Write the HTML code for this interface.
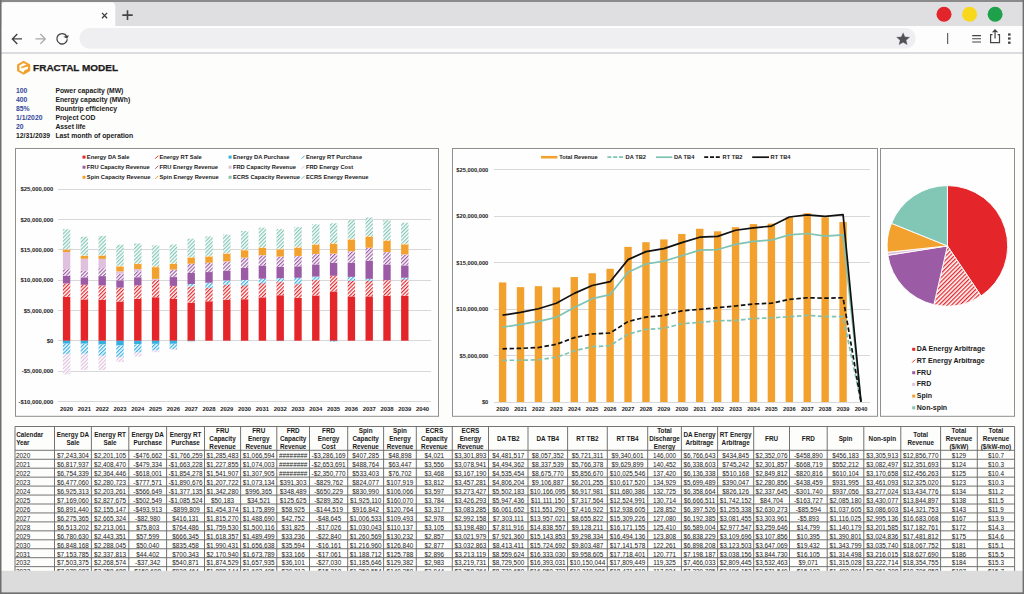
<!DOCTYPE html>
<html><head><meta charset="utf-8">
<style>
html,body{margin:0;padding:0;}
body{width:1024px;height:594px;overflow:hidden;position:relative;background:#fdfdfb;font-family:"Liberation Sans", sans-serif;}
svg text{font-family:"Liberation Sans", sans-serif;}
</style></head><body>
<svg width="1024" height="594" viewBox="0 0 1024 594" style="position:absolute;left:0;top:0">
<defs><pattern id="he4262b" patternUnits="userSpaceOnUse" width="2.65" height="2.65" patternTransform="rotate(45)"><rect width="2.65" height="2.65" fill="#fff"/><rect x="0" y="0" width="1.2" height="2.65" fill="#e4262b"/></pattern><pattern id="h35aee0" patternUnits="userSpaceOnUse" width="2.65" height="2.65" patternTransform="rotate(45)"><rect width="2.65" height="2.65" fill="#fff"/><rect x="0" y="0" width="1.2" height="2.65" fill="#35aee0"/></pattern><pattern id="h9c5ba5" patternUnits="userSpaceOnUse" width="2.65" height="2.65" patternTransform="rotate(45)"><rect width="2.65" height="2.65" fill="#fff"/><rect x="0" y="0" width="1.2" height="2.65" fill="#9c5ba5"/></pattern><pattern id="hdfc1df" patternUnits="userSpaceOnUse" width="2.65" height="2.65" patternTransform="rotate(45)"><rect width="2.65" height="2.65" fill="#fff"/><rect x="0" y="0" width="1.2" height="2.65" fill="#dfc1df"/></pattern><pattern id="hf2a12e" patternUnits="userSpaceOnUse" width="2.65" height="2.65" patternTransform="rotate(45)"><rect width="2.65" height="2.65" fill="#fff"/><rect x="0" y="0" width="1.2" height="2.65" fill="#f2a12e"/></pattern><pattern id="h82c6b6" patternUnits="userSpaceOnUse" width="2.65" height="2.65" patternTransform="rotate(45)"><rect width="2.65" height="2.65" fill="#fff"/><rect x="0" y="0" width="1.2" height="2.65" fill="#82c6b6"/></pattern><pattern id="pe4262b" patternUnits="userSpaceOnUse" width="3.0" height="3.0" patternTransform="rotate(45)"><rect width="3.0" height="3.0" fill="#fff"/><rect x="0" y="0" width="1.3" height="3.0" fill="#e4262b"/></pattern></defs>
<!-- page bg -->
<rect x="0" y="0" width="1024" height="594" fill="#fdfdfb"/>
<!-- browser chrome -->
<rect x="0" y="0" width="1024" height="26" fill="#dfdee1"/>
<path d="M1.5,26 L1.5,6 Q1.5,2.2 5.5,2.2 L111,2.2 Q115.3,2.2 115.3,6.5 L115.3,26 Z" fill="#fdfdfd"/>
<rect x="0" y="26" width="1024" height="26" fill="#fdfdfd"/>
<rect x="0" y="52" width="1024" height="2" fill="#dcdce0"/>
<rect x="79.4" y="28" width="836.4" height="20.6" rx="10.3" fill="#efeef0"/>
<!-- tab close x -->
<path d="M102,12.9 L107.1,18.2 M107.1,12.9 L102,18.2" stroke="#3c3c3c" stroke-width="1.3" fill="none"/>
<!-- new tab + -->
<path d="M127.5,10.2 L127.5,20 M122.3,15.1 L132.7,15.1" stroke="#444" stroke-width="1.6" fill="none"/>
<!-- traffic lights -->
<circle cx="944" cy="14.2" r="7.5" fill="#e3252b"/>
<circle cx="969.6" cy="14.2" r="7.5" fill="#f8d81c"/>
<circle cx="995.1" cy="14.2" r="7.5" fill="#1ea14a"/>
<!-- back -->
<path d="M22,38.9 L12.6,38.9 M17.3,34.0 L12.4,38.9 L17.3,43.9" stroke="#444" stroke-width="1.4" fill="none"/>
<!-- forward -->
<path d="M35.5,38.9 L45,38.9 M40.4,34.0 L45.2,38.9 L40.4,43.9" stroke="#a8a8a8" stroke-width="1.3" fill="none"/>
<!-- reload -->
<path d="M66.6,36.15 A5.2,5.2 0 1 0 67.28,39.2" stroke="#444" stroke-width="1.3" fill="none"/>
<path d="M63.3,36.7 L68.9,35.3 L67.3,38.8 Z" fill="#444"/>
<!-- star -->
<path d="M903.1,32.9 L904.9,36.9 L909.5,37.3 L906.0,40.3 L907.1,44.6 L903.1,42.3 L899.1,44.6 L900.2,40.3 L896.7,37.3 L901.3,36.9 Z" fill="#505055" stroke="#505055" stroke-width="0.4" stroke-linejoin="round"/>
<!-- bar -->
<rect x="947.1" y="33" width="1.1" height="11" fill="#555"/>
<!-- hamburger -->
<path d="M972.2,35.6 L981,35.6 M972.2,38.8 L981,38.8 M972.2,42 L981,42" stroke="#444" stroke-width="1.1" fill="none"/>
<!-- share -->
<path d="M992.5,34.6 L990.6,34.6 L990.6,42.6 L999.5,42.6 L999.5,34.6 L997.6,34.6 M995.05,30 L995.05,38.5 M992.6,32.4 L995.05,29.9 L997.5,32.4" stroke="#444" stroke-width="1.2" fill="none"/>
<!-- kebab -->
<rect x="1008" y="33.4" width="2.6" height="2.2" fill="#444"/>
<rect x="1008" y="37.4" width="2.6" height="2.2" fill="#444"/>
<rect x="1008" y="41.6" width="2.6" height="2.2" fill="#444"/>
<!-- logo -->
<path d="M23.65,60.8 L30.2,64.55 L30.2,71.05 L23.65,74.8 L17.1,71.05 L17.1,64.55 Z" fill="#f1a12c"/>
<path d="M23.65,63.0 L28.0,65.5 L28.0,70.2 L23.65,72.6 L19.4,70.2 L19.4,65.5 Z" fill="#fff"/>
<path d="M21.3,66.7 L28.2,64.0 L28.2,66.5 L21.5,68.2 Q20.9,67.5 21.3,66.7 Z" fill="#f1a12c"/>
<path d="M24.0,70.7 L28.2,68.6 L28.2,71.2 L23.65,73.2 Z" fill="#f1a12c"/>
<text x="33.1" y="70.8" font-size="9.0" font-weight="bold" fill="#1c1c1c" stroke="#1c1c1c" stroke-width="0.25" textLength="85" lengthAdjust="spacingAndGlyphs">FRACTAL MODEL</text>
<text x="16" y="93.00" font-size="6.8" font-weight="bold" fill="#34489c">100</text>
<text x="55.4" y="93.00" font-size="6.8" font-weight="bold" fill="#1a1a1a">Power capacity (MW)</text>
<text x="16" y="101.95" font-size="6.8" font-weight="bold" fill="#34489c">400</text>
<text x="55.4" y="101.95" font-size="6.8" font-weight="bold" fill="#1a1a1a">Energy capacity (MWh)</text>
<text x="16" y="110.90" font-size="6.8" font-weight="bold" fill="#34489c">85%</text>
<text x="55.4" y="110.90" font-size="6.8" font-weight="bold" fill="#1a1a1a">Rountrip efficiency</text>
<text x="16" y="119.85" font-size="6.8" font-weight="bold" fill="#34489c">1/1/2020</text>
<text x="55.4" y="119.85" font-size="6.8" font-weight="bold" fill="#1a1a1a">Project COD</text>
<text x="16" y="128.80" font-size="6.8" font-weight="bold" fill="#34489c">20</text>
<text x="55.4" y="128.80" font-size="6.8" font-weight="bold" fill="#1a1a1a">Asset life</text>
<text x="16" y="137.75" font-size="6.8" font-weight="bold" fill="#1a1a1a">12/31/2039</text>
<text x="55.4" y="137.75" font-size="6.8" font-weight="bold" fill="#1a1a1a">Last month of operation</text>
<rect x="15.5" y="148.5" width="423" height="267.8" fill="#fefefe" stroke="#8f8f8f" stroke-width="1"/>
<line x1="58" x2="431" y1="189.50" y2="189.50" stroke="#d8d8d8" stroke-width="1"/>
<text x="53.30" y="191.15" font-size="5.9" text-anchor="end" font-weight="bold" fill="#1a1a1a" >$25,000,000</text>
<line x1="58" x2="431" y1="219.50" y2="219.50" stroke="#d8d8d8" stroke-width="1"/>
<text x="53.30" y="221.50" font-size="5.9" text-anchor="end" font-weight="bold" fill="#1a1a1a" >$20,000,000</text>
<line x1="58" x2="431" y1="249.50" y2="249.50" stroke="#d8d8d8" stroke-width="1"/>
<text x="53.30" y="251.85" font-size="5.9" text-anchor="end" font-weight="bold" fill="#1a1a1a" >$15,000,000</text>
<line x1="58" x2="431" y1="280.50" y2="280.50" stroke="#d8d8d8" stroke-width="1"/>
<text x="53.30" y="282.20" font-size="5.9" text-anchor="end" font-weight="bold" fill="#1a1a1a" >$10,000,000</text>
<line x1="58" x2="431" y1="310.50" y2="310.50" stroke="#d8d8d8" stroke-width="1"/>
<text x="53.30" y="312.55" font-size="5.9" text-anchor="end" font-weight="bold" fill="#1a1a1a" >$5,000,000</text>
<line x1="58" x2="431" y1="340.50" y2="340.50" stroke="#d8d8d8" stroke-width="1"/>
<text x="53.30" y="342.90" font-size="5.9" text-anchor="end" font-weight="bold" fill="#1a1a1a" >$0</text>
<line x1="58" x2="431" y1="371.50" y2="371.50" stroke="#d8d8d8" stroke-width="1"/>
<text x="53.30" y="373.25" font-size="5.9" text-anchor="end" font-weight="bold" fill="#1a1a1a" >-$5,000,000</text>
<line x1="58" x2="431" y1="401.50" y2="401.50" stroke="#d8d8d8" stroke-width="1"/>
<text x="53.30" y="403.60" font-size="5.9" text-anchor="end" font-weight="bold" fill="#1a1a1a" >-$10,000,000</text>
<text x="66.60" y="410.60" font-size="5.9" text-anchor="middle" font-weight="bold" fill="#1a1a1a" >2020</text>
<text x="84.40" y="410.60" font-size="5.9" text-anchor="middle" font-weight="bold" fill="#1a1a1a" >2021</text>
<text x="102.20" y="410.60" font-size="5.9" text-anchor="middle" font-weight="bold" fill="#1a1a1a" >2022</text>
<text x="120.00" y="410.60" font-size="5.9" text-anchor="middle" font-weight="bold" fill="#1a1a1a" >2023</text>
<text x="137.80" y="410.60" font-size="5.9" text-anchor="middle" font-weight="bold" fill="#1a1a1a" >2024</text>
<text x="155.60" y="410.60" font-size="5.9" text-anchor="middle" font-weight="bold" fill="#1a1a1a" >2025</text>
<text x="173.40" y="410.60" font-size="5.9" text-anchor="middle" font-weight="bold" fill="#1a1a1a" >2026</text>
<text x="191.20" y="410.60" font-size="5.9" text-anchor="middle" font-weight="bold" fill="#1a1a1a" >2027</text>
<text x="209.00" y="410.60" font-size="5.9" text-anchor="middle" font-weight="bold" fill="#1a1a1a" >2028</text>
<text x="226.80" y="410.60" font-size="5.9" text-anchor="middle" font-weight="bold" fill="#1a1a1a" >2029</text>
<text x="244.60" y="410.60" font-size="5.9" text-anchor="middle" font-weight="bold" fill="#1a1a1a" >2030</text>
<text x="262.40" y="410.60" font-size="5.9" text-anchor="middle" font-weight="bold" fill="#1a1a1a" >2031</text>
<text x="280.20" y="410.60" font-size="5.9" text-anchor="middle" font-weight="bold" fill="#1a1a1a" >2032</text>
<text x="298.00" y="410.60" font-size="5.9" text-anchor="middle" font-weight="bold" fill="#1a1a1a" >2033</text>
<text x="315.80" y="410.60" font-size="5.9" text-anchor="middle" font-weight="bold" fill="#1a1a1a" >2034</text>
<text x="333.60" y="410.60" font-size="5.9" text-anchor="middle" font-weight="bold" fill="#1a1a1a" >2035</text>
<text x="351.40" y="410.60" font-size="5.9" text-anchor="middle" font-weight="bold" fill="#1a1a1a" >2036</text>
<text x="369.20" y="410.60" font-size="5.9" text-anchor="middle" font-weight="bold" fill="#1a1a1a" >2037</text>
<text x="387.00" y="410.60" font-size="5.9" text-anchor="middle" font-weight="bold" fill="#1a1a1a" >2038</text>
<text x="404.80" y="410.60" font-size="5.9" text-anchor="middle" font-weight="bold" fill="#1a1a1a" >2039</text>
<text x="422.60" y="410.60" font-size="5.9" text-anchor="middle" font-weight="bold" fill="#1a1a1a" >2040</text>
<rect x="62.90" y="296.83" width="7.4" height="43.97" fill="#e4262b"/>
<rect x="62.90" y="283.47" width="7.4" height="13.36" fill="url(#he4262b)"/>
<rect x="62.90" y="340.80" width="7.4" height="2.89" fill="#35aee0"/>
<rect x="62.90" y="343.69" width="7.4" height="10.72" fill="url(#h35aee0)"/>
<rect x="62.90" y="275.67" width="7.4" height="7.80" fill="#9c5ba5"/>
<rect x="62.90" y="269.20" width="7.4" height="6.47" fill="url(#h9c5ba5)"/>
<rect x="62.90" y="252.03" width="7.4" height="17.16" fill="#dfc1df"/>
<rect x="62.90" y="354.41" width="7.4" height="19.95" fill="url(#hdfc1df)"/>
<rect x="62.90" y="249.56" width="7.4" height="2.47" fill="#f2a12e"/>
<rect x="62.90" y="249.26" width="7.4" height="0.30" fill="url(#hf2a12e)"/>
<rect x="62.90" y="229.20" width="7.4" height="20.04" fill="url(#h82c6b6)"/>
<rect x="80.70" y="299.42" width="7.4" height="41.38" fill="#e4262b"/>
<rect x="80.70" y="284.80" width="7.4" height="14.62" fill="url(#he4262b)"/>
<rect x="80.70" y="340.80" width="7.4" height="2.91" fill="#35aee0"/>
<rect x="80.70" y="343.71" width="7.4" height="10.10" fill="url(#h35aee0)"/>
<rect x="80.70" y="277.34" width="7.4" height="7.45" fill="#9c5ba5"/>
<rect x="80.70" y="270.82" width="7.4" height="6.52" fill="url(#h9c5ba5)"/>
<rect x="80.70" y="258.77" width="7.4" height="12.05" fill="#dfc1df"/>
<rect x="80.70" y="353.81" width="7.4" height="16.11" fill="url(#hdfc1df)"/>
<rect x="80.70" y="255.81" width="7.4" height="2.97" fill="#f2a12e"/>
<rect x="80.70" y="255.42" width="7.4" height="0.39" fill="url(#hf2a12e)"/>
<rect x="80.70" y="236.71" width="7.4" height="18.69" fill="url(#h82c6b6)"/>
<rect x="98.50" y="299.80" width="7.4" height="41.00" fill="#e4262b"/>
<rect x="98.50" y="285.45" width="7.4" height="14.35" fill="url(#he4262b)"/>
<rect x="98.50" y="340.80" width="7.4" height="3.75" fill="#35aee0"/>
<rect x="98.50" y="344.55" width="7.4" height="11.26" fill="url(#h35aee0)"/>
<rect x="98.50" y="276.09" width="7.4" height="9.36" fill="#9c5ba5"/>
<rect x="98.50" y="268.15" width="7.4" height="7.94" fill="url(#h9c5ba5)"/>
<rect x="98.50" y="258.86" width="7.4" height="9.29" fill="#dfc1df"/>
<rect x="98.50" y="355.81" width="7.4" height="14.27" fill="url(#hdfc1df)"/>
<rect x="98.50" y="255.63" width="7.4" height="3.24" fill="#f2a12e"/>
<rect x="98.50" y="255.16" width="7.4" height="0.47" fill="url(#hf2a12e)"/>
<rect x="98.50" y="235.91" width="7.4" height="19.22" fill="url(#h82c6b6)"/>
<rect x="116.30" y="301.48" width="7.4" height="39.32" fill="#e4262b"/>
<rect x="116.30" y="287.64" width="7.4" height="13.84" fill="url(#he4262b)"/>
<rect x="116.30" y="340.80" width="7.4" height="4.72" fill="#35aee0"/>
<rect x="116.30" y="345.52" width="7.4" height="11.48" fill="url(#h35aee0)"/>
<rect x="116.30" y="280.31" width="7.4" height="7.33" fill="#9c5ba5"/>
<rect x="116.30" y="273.80" width="7.4" height="6.51" fill="url(#h9c5ba5)"/>
<rect x="116.30" y="271.42" width="7.4" height="2.38" fill="#dfc1df"/>
<rect x="116.30" y="357.00" width="7.4" height="5.04" fill="url(#hdfc1df)"/>
<rect x="116.30" y="266.42" width="7.4" height="5.00" fill="#f2a12e"/>
<rect x="116.30" y="265.76" width="7.4" height="0.66" fill="url(#hf2a12e)"/>
<rect x="116.30" y="244.75" width="7.4" height="20.99" fill="url(#h82c6b6)"/>
<rect x="134.10" y="298.76" width="7.4" height="42.04" fill="#e4262b"/>
<rect x="134.10" y="285.39" width="7.4" height="13.37" fill="url(#he4262b)"/>
<rect x="134.10" y="340.80" width="7.4" height="3.44" fill="#35aee0"/>
<rect x="134.10" y="344.24" width="7.4" height="8.36" fill="url(#h35aee0)"/>
<rect x="134.10" y="277.24" width="7.4" height="8.15" fill="#9c5ba5"/>
<rect x="134.10" y="271.19" width="7.4" height="6.05" fill="url(#h9c5ba5)"/>
<rect x="134.10" y="269.08" width="7.4" height="2.12" fill="#dfc1df"/>
<rect x="134.10" y="352.60" width="7.4" height="3.95" fill="url(#hdfc1df)"/>
<rect x="134.10" y="264.03" width="7.4" height="5.04" fill="#f2a12e"/>
<rect x="134.10" y="263.39" width="7.4" height="0.64" fill="url(#hf2a12e)"/>
<rect x="134.10" y="243.50" width="7.4" height="19.87" fill="url(#h82c6b6)"/>
<rect x="151.90" y="297.28" width="7.4" height="43.52" fill="#e4262b"/>
<rect x="151.90" y="280.12" width="7.4" height="17.16" fill="url(#he4262b)"/>
<rect x="151.90" y="340.80" width="7.4" height="3.05" fill="#35aee0"/>
<rect x="151.90" y="343.85" width="7.4" height="6.59" fill="url(#h35aee0)"/>
<rect x="151.90" y="279.82" width="7.4" height="0.30" fill="#9c5ba5"/>
<rect x="151.90" y="279.61" width="7.4" height="0.21" fill="url(#h9c5ba5)"/>
<rect x="151.90" y="278.84" width="7.4" height="0.76" fill="#dfc1df"/>
<rect x="151.90" y="350.44" width="7.4" height="1.76" fill="url(#hdfc1df)"/>
<rect x="151.90" y="267.16" width="7.4" height="11.69" fill="#f2a12e"/>
<rect x="151.90" y="266.19" width="7.4" height="0.97" fill="url(#hf2a12e)"/>
<rect x="151.90" y="245.37" width="7.4" height="20.80" fill="url(#h82c6b6)"/>
<rect x="169.70" y="298.97" width="7.4" height="41.83" fill="#e4262b"/>
<rect x="169.70" y="285.89" width="7.4" height="13.08" fill="url(#he4262b)"/>
<rect x="169.70" y="340.80" width="7.4" height="3.00" fill="#35aee0"/>
<rect x="169.70" y="343.80" width="7.4" height="5.46" fill="url(#h35aee0)"/>
<rect x="169.70" y="277.06" width="7.4" height="8.83" fill="#9c5ba5"/>
<rect x="169.70" y="269.92" width="7.4" height="7.14" fill="url(#h9c5ba5)"/>
<rect x="169.70" y="269.56" width="7.4" height="0.36" fill="#dfc1df"/>
<rect x="169.70" y="349.26" width="7.4" height="0.88" fill="url(#hdfc1df)"/>
<rect x="169.70" y="264.00" width="7.4" height="5.57" fill="#f2a12e"/>
<rect x="169.70" y="263.27" width="7.4" height="0.73" fill="url(#hf2a12e)"/>
<rect x="169.70" y="244.53" width="7.4" height="18.72" fill="url(#h82c6b6)"/>
<rect x="187.50" y="302.71" width="7.4" height="38.09" fill="#e4262b"/>
<rect x="187.50" y="286.53" width="7.4" height="16.18" fill="url(#he4262b)"/>
<rect x="187.50" y="340.80" width="7.4" height="0.50" fill="#35aee0"/>
<rect x="187.50" y="284.00" width="7.4" height="2.53" fill="url(#h35aee0)"/>
<rect x="187.50" y="272.99" width="7.4" height="11.02" fill="#9c5ba5"/>
<rect x="187.50" y="263.95" width="7.4" height="9.04" fill="url(#h9c5ba5)"/>
<rect x="187.50" y="263.69" width="7.4" height="0.26" fill="#dfc1df"/>
<rect x="187.50" y="341.30" width="7.4" height="0.30" fill="url(#hdfc1df)"/>
<rect x="187.50" y="257.58" width="7.4" height="6.11" fill="#f2a12e"/>
<rect x="187.50" y="256.92" width="7.4" height="0.66" fill="url(#hf2a12e)"/>
<rect x="187.50" y="238.73" width="7.4" height="18.16" fill="url(#h82c6b6)"/>
<rect x="205.30" y="301.26" width="7.4" height="39.54" fill="#e4262b"/>
<rect x="205.30" y="287.83" width="7.4" height="13.43" fill="url(#he4262b)"/>
<rect x="205.30" y="287.37" width="7.4" height="0.46" fill="#35aee0"/>
<rect x="205.30" y="282.73" width="7.4" height="4.64" fill="url(#h35aee0)"/>
<rect x="205.30" y="272.05" width="7.4" height="10.68" fill="#9c5ba5"/>
<rect x="205.30" y="262.94" width="7.4" height="9.11" fill="url(#h9c5ba5)"/>
<rect x="205.30" y="262.75" width="7.4" height="0.19" fill="#dfc1df"/>
<rect x="205.30" y="340.80" width="7.4" height="0.10" fill="url(#hdfc1df)"/>
<rect x="205.30" y="256.50" width="7.4" height="6.25" fill="#f2a12e"/>
<rect x="205.30" y="255.83" width="7.4" height="0.67" fill="url(#hf2a12e)"/>
<rect x="205.30" y="236.40" width="7.4" height="19.41" fill="url(#h82c6b6)"/>
<rect x="223.10" y="299.64" width="7.4" height="41.16" fill="#e4262b"/>
<rect x="223.10" y="284.81" width="7.4" height="14.83" fill="url(#he4262b)"/>
<rect x="223.10" y="284.46" width="7.4" height="0.35" fill="#35aee0"/>
<rect x="223.10" y="280.42" width="7.4" height="4.04" fill="url(#h35aee0)"/>
<rect x="223.10" y="270.59" width="7.4" height="9.82" fill="#9c5ba5"/>
<rect x="223.10" y="261.55" width="7.4" height="9.04" fill="url(#h9c5ba5)"/>
<rect x="223.10" y="261.35" width="7.4" height="0.20" fill="#dfc1df"/>
<rect x="223.10" y="340.80" width="7.4" height="0.14" fill="url(#hdfc1df)"/>
<rect x="223.10" y="253.70" width="7.4" height="7.65" fill="#f2a12e"/>
<rect x="223.10" y="252.91" width="7.4" height="0.79" fill="url(#hf2a12e)"/>
<rect x="223.10" y="234.55" width="7.4" height="18.34" fill="url(#h82c6b6)"/>
<rect x="240.90" y="299.23" width="7.4" height="41.57" fill="#e4262b"/>
<rect x="240.90" y="285.34" width="7.4" height="13.89" fill="url(#he4262b)"/>
<rect x="240.90" y="285.04" width="7.4" height="0.30" fill="#35aee0"/>
<rect x="240.90" y="279.97" width="7.4" height="5.07" fill="url(#h35aee0)"/>
<rect x="240.90" y="267.89" width="7.4" height="12.08" fill="#9c5ba5"/>
<rect x="240.90" y="257.83" width="7.4" height="10.06" fill="url(#h9c5ba5)"/>
<rect x="240.90" y="257.61" width="7.4" height="0.22" fill="#dfc1df"/>
<rect x="240.90" y="340.80" width="7.4" height="0.10" fill="url(#hdfc1df)"/>
<rect x="240.90" y="250.23" width="7.4" height="7.39" fill="#f2a12e"/>
<rect x="240.90" y="249.46" width="7.4" height="0.77" fill="url(#hf2a12e)"/>
<rect x="240.90" y="231.03" width="7.4" height="18.41" fill="url(#h82c6b6)"/>
<rect x="258.70" y="297.38" width="7.4" height="43.42" fill="#e4262b"/>
<rect x="258.70" y="283.19" width="7.4" height="14.19" fill="url(#he4262b)"/>
<rect x="258.70" y="282.92" width="7.4" height="0.27" fill="#35aee0"/>
<rect x="258.70" y="278.67" width="7.4" height="4.25" fill="url(#h35aee0)"/>
<rect x="258.70" y="265.49" width="7.4" height="13.18" fill="#9c5ba5"/>
<rect x="258.70" y="255.33" width="7.4" height="10.16" fill="url(#h9c5ba5)"/>
<rect x="258.70" y="255.13" width="7.4" height="0.20" fill="#dfc1df"/>
<rect x="258.70" y="340.80" width="7.4" height="0.10" fill="url(#hdfc1df)"/>
<rect x="258.70" y="247.91" width="7.4" height="7.22" fill="#f2a12e"/>
<rect x="258.70" y="247.15" width="7.4" height="0.76" fill="url(#hf2a12e)"/>
<rect x="258.70" y="227.63" width="7.4" height="19.50" fill="url(#h82c6b6)"/>
<rect x="276.50" y="295.25" width="7.4" height="45.55" fill="#e4262b"/>
<rect x="276.50" y="281.48" width="7.4" height="13.77" fill="url(#he4262b)"/>
<rect x="276.50" y="340.80" width="7.4" height="0.23" fill="#35aee0"/>
<rect x="276.50" y="278.20" width="7.4" height="3.28" fill="url(#h35aee0)"/>
<rect x="276.50" y="266.82" width="7.4" height="11.38" fill="#9c5ba5"/>
<rect x="276.50" y="256.76" width="7.4" height="10.06" fill="url(#h9c5ba5)"/>
<rect x="276.50" y="256.54" width="7.4" height="0.22" fill="#dfc1df"/>
<rect x="276.50" y="341.03" width="7.4" height="0.16" fill="url(#hdfc1df)"/>
<rect x="276.50" y="249.34" width="7.4" height="7.20" fill="#f2a12e"/>
<rect x="276.50" y="248.56" width="7.4" height="0.79" fill="url(#hf2a12e)"/>
<rect x="276.50" y="229.00" width="7.4" height="19.54" fill="url(#h82c6b6)"/>
<rect x="294.30" y="297.76" width="7.4" height="43.04" fill="#e4262b"/>
<rect x="294.30" y="284.11" width="7.4" height="13.66" fill="url(#he4262b)"/>
<rect x="294.30" y="283.50" width="7.4" height="0.61" fill="#35aee0"/>
<rect x="294.30" y="277.79" width="7.4" height="5.71" fill="url(#h35aee0)"/>
<rect x="294.30" y="266.32" width="7.4" height="11.47" fill="#9c5ba5"/>
<rect x="294.30" y="256.12" width="7.4" height="10.20" fill="url(#h9c5ba5)"/>
<rect x="294.30" y="255.94" width="7.4" height="0.18" fill="#dfc1df"/>
<rect x="294.30" y="340.80" width="7.4" height="0.12" fill="url(#hdfc1df)"/>
<rect x="294.30" y="247.75" width="7.4" height="8.19" fill="#f2a12e"/>
<rect x="294.30" y="246.90" width="7.4" height="0.85" fill="url(#hf2a12e)"/>
<rect x="294.30" y="227.09" width="7.4" height="19.79" fill="url(#h82c6b6)"/>
<rect x="312.10" y="295.46" width="7.4" height="45.34" fill="#e4262b"/>
<rect x="312.10" y="279.92" width="7.4" height="15.54" fill="url(#he4262b)"/>
<rect x="312.10" y="279.61" width="7.4" height="0.30" fill="#35aee0"/>
<rect x="312.10" y="276.58" width="7.4" height="3.03" fill="url(#h35aee0)"/>
<rect x="312.10" y="264.44" width="7.4" height="12.14" fill="#9c5ba5"/>
<rect x="312.10" y="254.12" width="7.4" height="10.32" fill="url(#h9c5ba5)"/>
<rect x="312.10" y="253.94" width="7.4" height="0.18" fill="#dfc1df"/>
<rect x="312.10" y="340.80" width="7.4" height="0.12" fill="url(#hdfc1df)"/>
<rect x="312.10" y="244.71" width="7.4" height="9.23" fill="#f2a12e"/>
<rect x="312.10" y="243.86" width="7.4" height="0.85" fill="url(#hf2a12e)"/>
<rect x="312.10" y="224.30" width="7.4" height="19.55" fill="url(#h82c6b6)"/>
<rect x="329.90" y="291.39" width="7.4" height="49.41" fill="#e4262b"/>
<rect x="329.90" y="275.79" width="7.4" height="15.60" fill="url(#he4262b)"/>
<rect x="329.90" y="340.80" width="7.4" height="0.30" fill="#35aee0"/>
<rect x="329.90" y="341.10" width="7.4" height="0.73" fill="url(#h35aee0)"/>
<rect x="329.90" y="262.92" width="7.4" height="12.87" fill="#9c5ba5"/>
<rect x="329.90" y="253.82" width="7.4" height="9.11" fill="url(#h9c5ba5)"/>
<rect x="329.90" y="253.63" width="7.4" height="0.18" fill="#dfc1df"/>
<rect x="329.90" y="341.83" width="7.4" height="0.12" fill="url(#hdfc1df)"/>
<rect x="329.90" y="243.92" width="7.4" height="9.71" fill="#f2a12e"/>
<rect x="329.90" y="243.07" width="7.4" height="0.85" fill="url(#hf2a12e)"/>
<rect x="329.90" y="223.33" width="7.4" height="19.73" fill="url(#h82c6b6)"/>
<rect x="347.70" y="296.37" width="7.4" height="44.43" fill="#e4262b"/>
<rect x="347.70" y="280.89" width="7.4" height="15.48" fill="url(#he4262b)"/>
<rect x="347.70" y="280.59" width="7.4" height="0.30" fill="#35aee0"/>
<rect x="347.70" y="276.88" width="7.4" height="3.70" fill="url(#h35aee0)"/>
<rect x="347.70" y="262.80" width="7.4" height="14.08" fill="#9c5ba5"/>
<rect x="347.70" y="251.33" width="7.4" height="11.47" fill="url(#h9c5ba5)"/>
<rect x="347.70" y="251.15" width="7.4" height="0.18" fill="#dfc1df"/>
<rect x="347.70" y="340.80" width="7.4" height="0.12" fill="url(#hdfc1df)"/>
<rect x="347.70" y="239.55" width="7.4" height="11.59" fill="#f2a12e"/>
<rect x="347.70" y="238.70" width="7.4" height="0.85" fill="url(#hf2a12e)"/>
<rect x="347.70" y="219.81" width="7.4" height="18.88" fill="url(#h82c6b6)"/>
<rect x="365.50" y="296.37" width="7.4" height="44.43" fill="#e4262b"/>
<rect x="365.50" y="280.89" width="7.4" height="15.48" fill="url(#he4262b)"/>
<rect x="365.50" y="280.65" width="7.4" height="0.24" fill="#35aee0"/>
<rect x="365.50" y="278.83" width="7.4" height="1.82" fill="url(#h35aee0)"/>
<rect x="365.50" y="260.62" width="7.4" height="18.21" fill="#9c5ba5"/>
<rect x="365.50" y="247.87" width="7.4" height="12.75" fill="url(#h9c5ba5)"/>
<rect x="365.50" y="247.69" width="7.4" height="0.18" fill="#dfc1df"/>
<rect x="365.50" y="340.80" width="7.4" height="0.12" fill="url(#hdfc1df)"/>
<rect x="365.50" y="236.82" width="7.4" height="10.87" fill="#f2a12e"/>
<rect x="365.50" y="235.97" width="7.4" height="0.85" fill="url(#hf2a12e)"/>
<rect x="365.50" y="217.50" width="7.4" height="18.45" fill="url(#h82c6b6)"/>
<rect x="383.30" y="295.76" width="7.4" height="45.04" fill="#e4262b"/>
<rect x="383.30" y="280.10" width="7.4" height="15.66" fill="url(#he4262b)"/>
<rect x="383.30" y="264.44" width="7.4" height="15.66" fill="#9c5ba5"/>
<rect x="383.30" y="252.12" width="7.4" height="12.32" fill="url(#h9c5ba5)"/>
<rect x="383.30" y="251.94" width="7.4" height="0.18" fill="#dfc1df"/>
<rect x="383.30" y="340.80" width="7.4" height="0.12" fill="url(#hdfc1df)"/>
<rect x="383.30" y="240.83" width="7.4" height="11.11" fill="#f2a12e"/>
<rect x="383.30" y="239.98" width="7.4" height="0.85" fill="url(#hf2a12e)"/>
<rect x="383.30" y="220.11" width="7.4" height="19.85" fill="url(#h82c6b6)"/>
<rect x="401.10" y="295.76" width="7.4" height="45.04" fill="#e4262b"/>
<rect x="401.10" y="279.31" width="7.4" height="16.45" fill="url(#he4262b)"/>
<rect x="401.10" y="279.01" width="7.4" height="0.30" fill="#35aee0"/>
<rect x="401.10" y="277.73" width="7.4" height="1.27" fill="url(#h35aee0)"/>
<rect x="401.10" y="265.41" width="7.4" height="12.32" fill="#9c5ba5"/>
<rect x="401.10" y="254.55" width="7.4" height="10.87" fill="url(#h9c5ba5)"/>
<rect x="401.10" y="254.36" width="7.4" height="0.18" fill="#dfc1df"/>
<rect x="401.10" y="340.80" width="7.4" height="0.12" fill="url(#hdfc1df)"/>
<rect x="401.10" y="244.35" width="7.4" height="10.02" fill="#f2a12e"/>
<rect x="401.10" y="243.50" width="7.4" height="0.85" fill="url(#hf2a12e)"/>
<rect x="401.10" y="222.72" width="7.4" height="20.76" fill="url(#h82c6b6)"/>
<rect x="82.50" y="155.60" width="3" height="3" fill="#e4262b"/>
<text x="86.80" y="159.10" font-size="5.75" text-anchor="start" font-weight="bold" fill="#1a1a1a" >Energy DA Sale</text>
<line x1="155.20" y1="158.70" x2="158.20" y2="155.70" stroke="#e4262b" stroke-width="1"/>
<text x="159.50" y="159.10" font-size="5.75" text-anchor="start" font-weight="bold" fill="#1a1a1a" >Energy RT Sale</text>
<rect x="228.60" y="155.60" width="3" height="3" fill="#35aee0"/>
<text x="232.90" y="159.10" font-size="5.75" text-anchor="start" font-weight="bold" fill="#1a1a1a" >Energy DA Purchase</text>
<line x1="301.60" y1="158.70" x2="304.60" y2="155.70" stroke="#35aee0" stroke-width="1"/>
<text x="305.90" y="159.10" font-size="5.75" text-anchor="start" font-weight="bold" fill="#1a1a1a" >Energy RT Purchase</text>
<rect x="82.50" y="165.70" width="3" height="3" fill="#9c5ba5"/>
<text x="86.80" y="169.20" font-size="5.75" text-anchor="start" font-weight="bold" fill="#1a1a1a" >FRU Capacity Revenue</text>
<line x1="155.20" y1="168.80" x2="158.20" y2="165.80" stroke="#9c5ba5" stroke-width="1"/>
<text x="159.50" y="169.20" font-size="5.75" text-anchor="start" font-weight="bold" fill="#1a1a1a" >FRU Energy Revenue</text>
<rect x="228.60" y="165.70" width="3" height="3" fill="#dfc1df"/>
<text x="232.90" y="169.20" font-size="5.75" text-anchor="start" font-weight="bold" fill="#1a1a1a" >FRD Capacity Revenue</text>
<line x1="301.60" y1="168.80" x2="304.60" y2="165.80" stroke="#dfc1df" stroke-width="1"/>
<text x="305.90" y="169.20" font-size="5.75" text-anchor="start" font-weight="bold" fill="#1a1a1a" >FRD Energy Cost</text>
<rect x="82.50" y="175.80" width="3" height="3" fill="#f2a12e"/>
<text x="86.80" y="179.30" font-size="5.75" text-anchor="start" font-weight="bold" fill="#1a1a1a" >Spin Capacity Revenue</text>
<line x1="155.20" y1="178.90" x2="158.20" y2="175.90" stroke="#f2a12e" stroke-width="1"/>
<text x="159.50" y="179.30" font-size="5.75" text-anchor="start" font-weight="bold" fill="#1a1a1a" >Spin Energy Revenue</text>
<rect x="228.60" y="175.80" width="3" height="3" fill="#82c6b6"/>
<text x="232.90" y="179.30" font-size="5.75" text-anchor="start" font-weight="bold" fill="#1a1a1a" >ECRS Capacity Revenue</text>
<line x1="301.60" y1="178.90" x2="304.60" y2="175.90" stroke="#82c6b6" stroke-width="1"/>
<text x="305.90" y="179.30" font-size="5.75" text-anchor="start" font-weight="bold" fill="#1a1a1a" >ECRS Energy Revenue</text>
<rect x="452.5" y="148.5" width="425" height="267.8" fill="#fefefe" stroke="#8f8f8f" stroke-width="1"/>
<line x1="494" x2="870" y1="169.50" y2="169.50" stroke="#d8d8d8" stroke-width="1"/>
<text x="488.30" y="171.50" font-size="5.75" text-anchor="end" font-weight="bold" fill="#1a1a1a" >$25,000,000</text>
<line x1="494" x2="870" y1="216.50" y2="216.50" stroke="#d8d8d8" stroke-width="1"/>
<text x="488.30" y="218.00" font-size="5.75" text-anchor="end" font-weight="bold" fill="#1a1a1a" >$20,000,000</text>
<line x1="494" x2="870" y1="262.50" y2="262.50" stroke="#d8d8d8" stroke-width="1"/>
<text x="488.30" y="264.50" font-size="5.75" text-anchor="end" font-weight="bold" fill="#1a1a1a" >$15,000,000</text>
<line x1="494" x2="870" y1="309.50" y2="309.50" stroke="#d8d8d8" stroke-width="1"/>
<text x="488.30" y="311.00" font-size="5.75" text-anchor="end" font-weight="bold" fill="#1a1a1a" >$10,000,000</text>
<line x1="494" x2="870" y1="355.50" y2="355.50" stroke="#d8d8d8" stroke-width="1"/>
<text x="488.30" y="357.50" font-size="5.75" text-anchor="end" font-weight="bold" fill="#1a1a1a" >$5,000,000</text>
<line x1="494" x2="870" y1="402.50" y2="402.50" stroke="#d8d8d8" stroke-width="1"/>
<text x="488.30" y="404.00" font-size="5.75" text-anchor="end" font-weight="bold" fill="#1a1a1a" >$0</text>
<text x="502.60" y="410.80" font-size="5.7" text-anchor="middle" font-weight="bold" fill="#1a1a1a" >2020</text>
<text x="520.52" y="410.80" font-size="5.7" text-anchor="middle" font-weight="bold" fill="#1a1a1a" >2021</text>
<text x="538.44" y="410.80" font-size="5.7" text-anchor="middle" font-weight="bold" fill="#1a1a1a" >2022</text>
<text x="556.36" y="410.80" font-size="5.7" text-anchor="middle" font-weight="bold" fill="#1a1a1a" >2023</text>
<text x="574.28" y="410.80" font-size="5.7" text-anchor="middle" font-weight="bold" fill="#1a1a1a" >2024</text>
<text x="592.20" y="410.80" font-size="5.7" text-anchor="middle" font-weight="bold" fill="#1a1a1a" >2025</text>
<text x="610.12" y="410.80" font-size="5.7" text-anchor="middle" font-weight="bold" fill="#1a1a1a" >2026</text>
<text x="628.04" y="410.80" font-size="5.7" text-anchor="middle" font-weight="bold" fill="#1a1a1a" >2027</text>
<text x="645.96" y="410.80" font-size="5.7" text-anchor="middle" font-weight="bold" fill="#1a1a1a" >2028</text>
<text x="663.88" y="410.80" font-size="5.7" text-anchor="middle" font-weight="bold" fill="#1a1a1a" >2029</text>
<text x="681.80" y="410.80" font-size="5.7" text-anchor="middle" font-weight="bold" fill="#1a1a1a" >2030</text>
<text x="699.72" y="410.80" font-size="5.7" text-anchor="middle" font-weight="bold" fill="#1a1a1a" >2031</text>
<text x="717.64" y="410.80" font-size="5.7" text-anchor="middle" font-weight="bold" fill="#1a1a1a" >2032</text>
<text x="735.56" y="410.80" font-size="5.7" text-anchor="middle" font-weight="bold" fill="#1a1a1a" >2033</text>
<text x="753.48" y="410.80" font-size="5.7" text-anchor="middle" font-weight="bold" fill="#1a1a1a" >2034</text>
<text x="771.40" y="410.80" font-size="5.7" text-anchor="middle" font-weight="bold" fill="#1a1a1a" >2035</text>
<text x="789.32" y="410.80" font-size="5.7" text-anchor="middle" font-weight="bold" fill="#1a1a1a" >2036</text>
<text x="807.24" y="410.80" font-size="5.7" text-anchor="middle" font-weight="bold" fill="#1a1a1a" >2037</text>
<text x="825.16" y="410.80" font-size="5.7" text-anchor="middle" font-weight="bold" fill="#1a1a1a" >2038</text>
<text x="843.08" y="410.80" font-size="5.7" text-anchor="middle" font-weight="bold" fill="#1a1a1a" >2039</text>
<text x="861.00" y="410.80" font-size="5.7" text-anchor="middle" font-weight="bold" fill="#1a1a1a" >2040</text>
<rect x="498.90" y="282.43" width="7.4" height="119.57" fill="#f2a12e"/>
<rect x="516.82" y="287.13" width="7.4" height="114.87" fill="#f2a12e"/>
<rect x="534.74" y="286.16" width="7.4" height="115.84" fill="#f2a12e"/>
<rect x="552.66" y="287.38" width="7.4" height="114.62" fill="#f2a12e"/>
<rect x="570.58" y="277.06" width="7.4" height="124.94" fill="#f2a12e"/>
<rect x="588.50" y="273.24" width="7.4" height="128.76" fill="#f2a12e"/>
<rect x="606.42" y="268.81" width="7.4" height="133.19" fill="#f2a12e"/>
<rect x="624.34" y="246.85" width="7.4" height="155.15" fill="#f2a12e"/>
<rect x="642.26" y="242.20" width="7.4" height="159.80" fill="#f2a12e"/>
<rect x="660.18" y="239.42" width="7.4" height="162.58" fill="#f2a12e"/>
<rect x="678.10" y="233.97" width="7.4" height="168.03" fill="#f2a12e"/>
<rect x="696.02" y="228.76" width="7.4" height="173.24" fill="#f2a12e"/>
<rect x="713.94" y="231.30" width="7.4" height="170.70" fill="#f2a12e"/>
<rect x="731.86" y="227.16" width="7.4" height="174.84" fill="#f2a12e"/>
<rect x="749.78" y="224.09" width="7.4" height="177.91" fill="#f2a12e"/>
<rect x="767.70" y="223.63" width="7.4" height="178.37" fill="#f2a12e"/>
<rect x="785.62" y="217.30" width="7.4" height="184.70" fill="#f2a12e"/>
<rect x="803.54" y="213.21" width="7.4" height="188.79" fill="#f2a12e"/>
<rect x="821.46" y="217.30" width="7.4" height="184.70" fill="#f2a12e"/>
<rect x="839.38" y="222.04" width="7.4" height="179.96" fill="#f2a12e"/>
<polyline points="502.60,360.32 520.52,360.20 538.44,359.82 556.36,357.30 574.28,350.83 592.20,346.69 610.12,345.63 628.04,334.08 645.96,329.35 663.88,328.33 681.80,323.76 699.72,322.40 717.64,320.82 735.56,320.44 753.48,318.58 771.40,317.83 789.32,316.63 807.24,315.42 825.16,316.63 843.08,316.63 861.00,402.00" fill="none" stroke="#7fc3b3" stroke-width="1.7" stroke-linejoin="round" stroke-dasharray="4.5,2.5"/>
<polyline points="502.60,327.07 520.52,324.46 538.44,321.32 556.36,317.31 574.28,307.46 592.20,298.67 610.12,294.57 628.04,272.20 645.96,264.00 663.88,261.16 681.80,255.76 699.72,250.10 717.64,249.54 735.56,244.36 753.48,241.30 771.40,240.09 789.32,234.88 807.24,233.48 825.16,236.09 843.08,234.88 861.00,402.00" fill="none" stroke="#7fc3b3" stroke-width="1.7" stroke-linejoin="round"/>
<polyline points="502.60,348.79 520.52,348.37 538.44,347.53 556.36,344.33 574.28,337.66 592.20,333.95 610.12,333.02 628.04,321.50 645.96,317.11 663.88,315.53 681.80,310.83 699.72,309.38 717.64,307.60 735.56,306.02 753.48,303.98 771.40,303.23 789.32,299.42 807.24,297.75 825.16,298.21 843.08,297.75 861.00,402.00" fill="none" stroke="#111" stroke-width="1.7" stroke-linejoin="round" stroke-dasharray="4.5,2.5"/>
<polyline points="502.60,315.13 520.52,312.44 538.44,308.76 556.36,303.26 574.28,293.37 592.20,285.52 610.12,281.67 628.04,259.62 645.96,251.61 663.88,248.60 681.80,242.58 699.72,237.22 717.64,236.37 735.56,230.23 753.48,227.90 771.40,226.04 789.32,217.02 807.24,214.88 825.16,216.47 843.08,214.70 861.00,402.00" fill="none" stroke="#111" stroke-width="1.7" stroke-linejoin="round"/>
<line x1="541" x2="557.4" y1="157.2" y2="157.2" stroke="#f2a12e" stroke-width="2.6"/>
<text x="559.20" y="159.30" font-size="5.7" text-anchor="start" font-weight="bold" fill="#1a1a1a" >Total Revenue</text>
<line x1="607.4" x2="623" y1="157.2" y2="157.2" stroke="#7fc3b3" stroke-width="1.7" stroke-dasharray="4,1.8"/>
<text x="625.60" y="159.30" font-size="5.7" text-anchor="start" font-weight="bold" fill="#1a1a1a" >DA TB2</text>
<line x1="656" x2="672.3" y1="157.2" y2="157.2" stroke="#7fc3b3" stroke-width="1.7"/>
<text x="674.00" y="159.30" font-size="5.7" text-anchor="start" font-weight="bold" fill="#1a1a1a" >DA TB4</text>
<line x1="704.2" x2="719.8" y1="157.2" y2="157.2" stroke="#111" stroke-width="1.7" stroke-dasharray="4,1.8"/>
<text x="722.60" y="159.30" font-size="5.7" text-anchor="start" font-weight="bold" fill="#1a1a1a" >RT TB2</text>
<line x1="752.2" x2="769" y1="157.2" y2="157.2" stroke="#111" stroke-width="1.7"/>
<text x="770.60" y="159.30" font-size="5.7" text-anchor="start" font-weight="bold" fill="#1a1a1a" >RT TB4</text>
<rect x="880.5" y="148.5" width="134" height="267.8" fill="#fefefe" stroke="#8f8f8f" stroke-width="1"/>
<path d="M947.4,245.9 L947.40,185.60 A60.3,60.3 0 0 1 981.12,295.89 Z" fill="#e4262b" stroke="#fff" stroke-width="0.9" stroke-linejoin="round"/>
<path d="M947.4,245.9 L981.12,295.89 A60.3,60.3 0 0 1 933.84,304.65 Z" fill="url(#pe4262b)" stroke="#fff" stroke-width="0.9" stroke-linejoin="round"/>
<path d="M947.4,245.9 L933.84,304.65 A60.3,60.3 0 0 1 887.84,255.33 Z" fill="#9c5ba5" stroke="#fff" stroke-width="0.9" stroke-linejoin="round"/>
<path d="M947.4,245.9 L887.84,255.33 A60.3,60.3 0 0 1 887.43,252.20 Z" fill="#dfc1df" stroke="#fff" stroke-width="0.9" stroke-linejoin="round"/>
<path d="M947.4,245.9 L887.43,252.20 A60.3,60.3 0 0 1 891.49,223.31 Z" fill="#f2a12e" stroke="#fff" stroke-width="0.9" stroke-linejoin="round"/>
<path d="M947.4,245.9 L891.49,223.31 A60.3,60.3 0 0 1 947.40,185.60 Z" fill="#82c6b6" stroke="#fff" stroke-width="0.9" stroke-linejoin="round"/>
<rect x="912.2" y="347.80" width="3" height="3" fill="#e4262b"/>
<text x="916.80" y="351.30" font-size="7.0" text-anchor="start" font-weight="bold" fill="#1a1a1a" >DA Energy Arbitrage</text>
<line x1="912.2" y1="362.60" x2="915.2" y2="359.60" stroke="#e4262b" stroke-width="1"/>
<text x="916.80" y="363.00" font-size="7.0" text-anchor="start" font-weight="bold" fill="#1a1a1a" >RT Energy Arbitrage</text>
<rect x="912.2" y="371.20" width="3" height="3" fill="#9c5ba5"/>
<text x="916.80" y="374.70" font-size="7.0" text-anchor="start" font-weight="bold" fill="#1a1a1a" >FRU</text>
<rect x="912.2" y="382.90" width="3" height="3" fill="#dfc1df"/>
<text x="916.80" y="386.40" font-size="7.0" text-anchor="start" font-weight="bold" fill="#1a1a1a" >FRD</text>
<rect x="912.2" y="394.60" width="3" height="3" fill="#f2a12e"/>
<text x="916.80" y="398.10" font-size="7.0" text-anchor="start" font-weight="bold" fill="#1a1a1a" >Spin</text>
<rect x="912.2" y="406.30" width="3" height="3" fill="#82c6b6"/>
<text x="916.80" y="409.80" font-size="7.0" text-anchor="start" font-weight="bold" fill="#1a1a1a" >Non-spin</text>
<text x="16.20" y="436.67" font-size="6.35" font-weight="bold" fill="#1a1a1a">Calendar</text>
<text x="16.20" y="444.52" font-size="6.35" font-weight="bold" fill="#1a1a1a">Year</text>
<text x="72.95" y="436.67" font-size="6.35" font-weight="bold" text-anchor="middle" fill="#1a1a1a">Energy DA</text>
<text x="72.95" y="444.52" font-size="6.35" font-weight="bold" text-anchor="middle" fill="#1a1a1a">Sale</text>
<text x="110.10" y="436.67" font-size="6.35" font-weight="bold" text-anchor="middle" fill="#1a1a1a">Energy RT</text>
<text x="110.10" y="444.52" font-size="6.35" font-weight="bold" text-anchor="middle" fill="#1a1a1a">Sale</text>
<text x="147.70" y="436.67" font-size="6.35" font-weight="bold" text-anchor="middle" fill="#1a1a1a">Energy DA</text>
<text x="147.70" y="444.52" font-size="6.35" font-weight="bold" text-anchor="middle" fill="#1a1a1a">Purchase</text>
<text x="185.55" y="436.67" font-size="6.35" font-weight="bold" text-anchor="middle" fill="#1a1a1a">Energy RT</text>
<text x="185.55" y="444.52" font-size="6.35" font-weight="bold" text-anchor="middle" fill="#1a1a1a">Purchase</text>
<text x="222.55" y="432.75" font-size="6.35" font-weight="bold" text-anchor="middle" fill="#1a1a1a">FRU</text>
<text x="222.55" y="440.85" font-size="6.35" font-weight="bold" text-anchor="middle" fill="#1a1a1a">Capacity</text>
<text x="222.55" y="448.95" font-size="6.35" font-weight="bold" text-anchor="middle" fill="#1a1a1a">Revenue</text>
<text x="258.70" y="432.75" font-size="6.35" font-weight="bold" text-anchor="middle" fill="#1a1a1a">FRU</text>
<text x="258.70" y="440.85" font-size="6.35" font-weight="bold" text-anchor="middle" fill="#1a1a1a">Energy</text>
<text x="258.70" y="448.95" font-size="6.35" font-weight="bold" text-anchor="middle" fill="#1a1a1a">Revenue</text>
<text x="293.15" y="432.75" font-size="6.35" font-weight="bold" text-anchor="middle" fill="#1a1a1a">FRD</text>
<text x="293.15" y="440.85" font-size="6.35" font-weight="bold" text-anchor="middle" fill="#1a1a1a">Capacity</text>
<text x="293.15" y="448.95" font-size="6.35" font-weight="bold" text-anchor="middle" fill="#1a1a1a">Revenue</text>
<text x="328.60" y="432.75" font-size="6.35" font-weight="bold" text-anchor="middle" fill="#1a1a1a">FRD</text>
<text x="328.60" y="440.85" font-size="6.35" font-weight="bold" text-anchor="middle" fill="#1a1a1a">Energy</text>
<text x="328.60" y="448.95" font-size="6.35" font-weight="bold" text-anchor="middle" fill="#1a1a1a">Cost</text>
<text x="365.65" y="432.75" font-size="6.35" font-weight="bold" text-anchor="middle" fill="#1a1a1a">Spin</text>
<text x="365.65" y="440.85" font-size="6.35" font-weight="bold" text-anchor="middle" fill="#1a1a1a">Capacity</text>
<text x="365.65" y="448.95" font-size="6.35" font-weight="bold" text-anchor="middle" fill="#1a1a1a">Revenue</text>
<text x="399.95" y="432.75" font-size="6.35" font-weight="bold" text-anchor="middle" fill="#1a1a1a">Spin</text>
<text x="399.95" y="440.85" font-size="6.35" font-weight="bold" text-anchor="middle" fill="#1a1a1a">Energy</text>
<text x="399.95" y="448.95" font-size="6.35" font-weight="bold" text-anchor="middle" fill="#1a1a1a">Revenue</text>
<text x="434.30" y="432.75" font-size="6.35" font-weight="bold" text-anchor="middle" fill="#1a1a1a">ECRS</text>
<text x="434.30" y="440.85" font-size="6.35" font-weight="bold" text-anchor="middle" fill="#1a1a1a">Capacity</text>
<text x="434.30" y="448.95" font-size="6.35" font-weight="bold" text-anchor="middle" fill="#1a1a1a">Revenue</text>
<text x="470.40" y="432.75" font-size="6.35" font-weight="bold" text-anchor="middle" fill="#1a1a1a">ECRS</text>
<text x="470.40" y="440.85" font-size="6.35" font-weight="bold" text-anchor="middle" fill="#1a1a1a">Energy</text>
<text x="470.40" y="448.95" font-size="6.35" font-weight="bold" text-anchor="middle" fill="#1a1a1a">Revenue</text>
<text x="508.25" y="440.60" font-size="6.35" font-weight="bold" text-anchor="middle" fill="#1a1a1a">DA TB2</text>
<text x="547.80" y="440.60" font-size="6.35" font-weight="bold" text-anchor="middle" fill="#1a1a1a">DA TB4</text>
<text x="587.45" y="440.60" font-size="6.35" font-weight="bold" text-anchor="middle" fill="#1a1a1a">RT TB2</text>
<text x="627.50" y="440.60" font-size="6.35" font-weight="bold" text-anchor="middle" fill="#1a1a1a">RT TB4</text>
<text x="664.55" y="432.75" font-size="6.35" font-weight="bold" text-anchor="middle" fill="#1a1a1a">Total</text>
<text x="664.55" y="440.85" font-size="6.35" font-weight="bold" text-anchor="middle" fill="#1a1a1a">Discharge</text>
<text x="664.55" y="448.95" font-size="6.35" font-weight="bold" text-anchor="middle" fill="#1a1a1a">Energy</text>
<text x="699.50" y="436.67" font-size="6.35" font-weight="bold" text-anchor="middle" fill="#1a1a1a">DA Energy</text>
<text x="699.50" y="444.52" font-size="6.35" font-weight="bold" text-anchor="middle" fill="#1a1a1a">Arbitrage</text>
<text x="735.65" y="436.67" font-size="6.35" font-weight="bold" text-anchor="middle" fill="#1a1a1a">RT Energy</text>
<text x="735.65" y="444.52" font-size="6.35" font-weight="bold" text-anchor="middle" fill="#1a1a1a">Arbitrage</text>
<text x="771.60" y="440.60" font-size="6.35" font-weight="bold" text-anchor="middle" fill="#1a1a1a">FRU</text>
<text x="808.35" y="440.60" font-size="6.35" font-weight="bold" text-anchor="middle" fill="#1a1a1a">FRD</text>
<text x="845.50" y="440.60" font-size="6.35" font-weight="bold" text-anchor="middle" fill="#1a1a1a">Spin</text>
<text x="882.30" y="440.60" font-size="6.35" font-weight="bold" text-anchor="middle" fill="#1a1a1a">Non-spin</text>
<text x="920.70" y="436.67" font-size="6.35" font-weight="bold" text-anchor="middle" fill="#1a1a1a">Total</text>
<text x="920.70" y="444.52" font-size="6.35" font-weight="bold" text-anchor="middle" fill="#1a1a1a">Revenue</text>
<text x="958.95" y="432.75" font-size="6.35" font-weight="bold" text-anchor="middle" fill="#1a1a1a">Total</text>
<text x="958.95" y="440.85" font-size="6.35" font-weight="bold" text-anchor="middle" fill="#1a1a1a">Revenue</text>
<text x="958.95" y="448.95" font-size="6.35" font-weight="bold" text-anchor="middle" fill="#1a1a1a">($/kW)</text>
<text x="995.95" y="432.75" font-size="6.35" font-weight="bold" text-anchor="middle" fill="#1a1a1a">Total</text>
<text x="995.95" y="440.85" font-size="6.35" font-weight="bold" text-anchor="middle" fill="#1a1a1a">Revenue</text>
<text x="995.95" y="448.95" font-size="6.35" font-weight="bold" text-anchor="middle" fill="#1a1a1a">($/kW-mo)</text>
<text x="16.00" y="458.08" font-size="6.4" fill="#1a1a1a">2020</text>
<text x="72.95" y="458.08" font-size="6.4" text-anchor="middle" fill="#1a1a1a">$7,243,304</text>
<text x="110.10" y="458.08" font-size="6.4" text-anchor="middle" fill="#1a1a1a">$2,201,105</text>
<text x="147.70" y="458.08" font-size="6.4" text-anchor="middle" fill="#1a1a1a">-$476,662</text>
<text x="185.55" y="458.08" font-size="6.4" text-anchor="middle" fill="#1a1a1a">-$1,766,259</text>
<text x="222.55" y="458.08" font-size="6.4" text-anchor="middle" fill="#1a1a1a">$1,285,483</text>
<text x="258.70" y="458.08" font-size="6.4" text-anchor="middle" fill="#1a1a1a">$1,066,594</text>
<text x="293.15" y="458.08" font-size="6.4" text-anchor="middle" fill="#1a1a1a">########</text>
<text x="328.60" y="458.08" font-size="6.4" text-anchor="middle" fill="#1a1a1a">-$3,286,169</text>
<text x="365.65" y="458.08" font-size="6.4" text-anchor="middle" fill="#1a1a1a">$407,285</text>
<text x="399.95" y="458.08" font-size="6.4" text-anchor="middle" fill="#1a1a1a">$48,898</text>
<text x="434.30" y="458.08" font-size="6.4" text-anchor="middle" fill="#1a1a1a">$4,021</text>
<text x="470.40" y="458.08" font-size="6.4" text-anchor="middle" fill="#1a1a1a">$3,301,893</text>
<text x="508.25" y="458.08" font-size="6.4" text-anchor="middle" fill="#1a1a1a">$4,481,517</text>
<text x="547.80" y="458.08" font-size="6.4" text-anchor="middle" fill="#1a1a1a">$8,057,352</text>
<text x="587.45" y="458.08" font-size="6.4" text-anchor="middle" fill="#1a1a1a">$5,721,311</text>
<text x="627.50" y="458.08" font-size="6.4" text-anchor="middle" fill="#1a1a1a">$9,340,601</text>
<text x="664.55" y="458.08" font-size="6.4" text-anchor="middle" fill="#1a1a1a">146,000</text>
<text x="699.50" y="458.08" font-size="6.4" text-anchor="middle" fill="#1a1a1a">$6,766,643</text>
<text x="735.65" y="458.08" font-size="6.4" text-anchor="middle" fill="#1a1a1a">$434,845</text>
<text x="771.60" y="458.08" font-size="6.4" text-anchor="middle" fill="#1a1a1a">$2,352,076</text>
<text x="808.35" y="458.08" font-size="6.4" text-anchor="middle" fill="#1a1a1a">-$458,890</text>
<text x="845.50" y="458.08" font-size="6.4" text-anchor="middle" fill="#1a1a1a">$456,183</text>
<text x="882.30" y="458.08" font-size="6.4" text-anchor="middle" fill="#1a1a1a">$3,305,913</text>
<text x="920.70" y="458.08" font-size="6.4" text-anchor="middle" fill="#1a1a1a">$12,856,770</text>
<text x="958.95" y="458.08" font-size="6.4" text-anchor="middle" fill="#1a1a1a">$129</text>
<text x="995.95" y="458.08" font-size="6.4" text-anchor="middle" fill="#1a1a1a">$10.7</text>
<text x="16.00" y="467.03" font-size="6.4" fill="#1a1a1a">2021</text>
<text x="72.95" y="467.03" font-size="6.4" text-anchor="middle" fill="#1a1a1a">$6,817,937</text>
<text x="110.10" y="467.03" font-size="6.4" text-anchor="middle" fill="#1a1a1a">$2,408,470</text>
<text x="147.70" y="467.03" font-size="6.4" text-anchor="middle" fill="#1a1a1a">-$479,334</text>
<text x="185.55" y="467.03" font-size="6.4" text-anchor="middle" fill="#1a1a1a">-$1,663,228</text>
<text x="222.55" y="467.03" font-size="6.4" text-anchor="middle" fill="#1a1a1a">$1,227,855</text>
<text x="258.70" y="467.03" font-size="6.4" text-anchor="middle" fill="#1a1a1a">$1,074,003</text>
<text x="293.15" y="467.03" font-size="6.4" text-anchor="middle" fill="#1a1a1a">########</text>
<text x="328.60" y="467.03" font-size="6.4" text-anchor="middle" fill="#1a1a1a">-$2,653,691</text>
<text x="365.65" y="467.03" font-size="6.4" text-anchor="middle" fill="#1a1a1a">$488,764</text>
<text x="399.95" y="467.03" font-size="6.4" text-anchor="middle" fill="#1a1a1a">$63,447</text>
<text x="434.30" y="467.03" font-size="6.4" text-anchor="middle" fill="#1a1a1a">$3,556</text>
<text x="470.40" y="467.03" font-size="6.4" text-anchor="middle" fill="#1a1a1a">$3,078,941</text>
<text x="508.25" y="467.03" font-size="6.4" text-anchor="middle" fill="#1a1a1a">$4,494,362</text>
<text x="547.80" y="467.03" font-size="6.4" text-anchor="middle" fill="#1a1a1a">$8,337,539</text>
<text x="587.45" y="467.03" font-size="6.4" text-anchor="middle" fill="#1a1a1a">$5,766,378</text>
<text x="627.50" y="467.03" font-size="6.4" text-anchor="middle" fill="#1a1a1a">$9,629,899</text>
<text x="664.55" y="467.03" font-size="6.4" text-anchor="middle" fill="#1a1a1a">140,452</text>
<text x="699.50" y="467.03" font-size="6.4" text-anchor="middle" fill="#1a1a1a">$6,338,603</text>
<text x="735.65" y="467.03" font-size="6.4" text-anchor="middle" fill="#1a1a1a">$745,242</text>
<text x="771.60" y="467.03" font-size="6.4" text-anchor="middle" fill="#1a1a1a">$2,301,857</text>
<text x="808.35" y="467.03" font-size="6.4" text-anchor="middle" fill="#1a1a1a">-$668,719</text>
<text x="845.50" y="467.03" font-size="6.4" text-anchor="middle" fill="#1a1a1a">$552,212</text>
<text x="882.30" y="467.03" font-size="6.4" text-anchor="middle" fill="#1a1a1a">$3,082,497</text>
<text x="920.70" y="467.03" font-size="6.4" text-anchor="middle" fill="#1a1a1a">$12,351,693</text>
<text x="958.95" y="467.03" font-size="6.4" text-anchor="middle" fill="#1a1a1a">$124</text>
<text x="995.95" y="467.03" font-size="6.4" text-anchor="middle" fill="#1a1a1a">$10.3</text>
<text x="16.00" y="475.98" font-size="6.4" fill="#1a1a1a">2022</text>
<text x="72.95" y="475.98" font-size="6.4" text-anchor="middle" fill="#1a1a1a">$6,754,339</text>
<text x="110.10" y="475.98" font-size="6.4" text-anchor="middle" fill="#1a1a1a">$2,364,446</text>
<text x="147.70" y="475.98" font-size="6.4" text-anchor="middle" fill="#1a1a1a">-$618,001</text>
<text x="185.55" y="475.98" font-size="6.4" text-anchor="middle" fill="#1a1a1a">-$1,854,278</text>
<text x="222.55" y="475.98" font-size="6.4" text-anchor="middle" fill="#1a1a1a">$1,541,907</text>
<text x="258.70" y="475.98" font-size="6.4" text-anchor="middle" fill="#1a1a1a">$1,307,905</text>
<text x="293.15" y="475.98" font-size="6.4" text-anchor="middle" fill="#1a1a1a">########</text>
<text x="328.60" y="475.98" font-size="6.4" text-anchor="middle" fill="#1a1a1a">-$2,350,770</text>
<text x="365.65" y="475.98" font-size="6.4" text-anchor="middle" fill="#1a1a1a">$533,403</text>
<text x="399.95" y="475.98" font-size="6.4" text-anchor="middle" fill="#1a1a1a">$76,702</text>
<text x="434.30" y="475.98" font-size="6.4" text-anchor="middle" fill="#1a1a1a">$3,468</text>
<text x="470.40" y="475.98" font-size="6.4" text-anchor="middle" fill="#1a1a1a">$3,167,190</text>
<text x="508.25" y="475.98" font-size="6.4" text-anchor="middle" fill="#1a1a1a">$4,535,454</text>
<text x="547.80" y="475.98" font-size="6.4" text-anchor="middle" fill="#1a1a1a">$8,675,770</text>
<text x="587.45" y="475.98" font-size="6.4" text-anchor="middle" fill="#1a1a1a">$5,856,670</text>
<text x="627.50" y="475.98" font-size="6.4" text-anchor="middle" fill="#1a1a1a">$10,025,546</text>
<text x="664.55" y="475.98" font-size="6.4" text-anchor="middle" fill="#1a1a1a">137,420</text>
<text x="699.50" y="475.98" font-size="6.4" text-anchor="middle" fill="#1a1a1a">$6,136,338</text>
<text x="735.65" y="475.98" font-size="6.4" text-anchor="middle" fill="#1a1a1a">$510,168</text>
<text x="771.60" y="475.98" font-size="6.4" text-anchor="middle" fill="#1a1a1a">$2,849,812</text>
<text x="808.35" y="475.98" font-size="6.4" text-anchor="middle" fill="#1a1a1a">-$820,816</text>
<text x="845.50" y="475.98" font-size="6.4" text-anchor="middle" fill="#1a1a1a">$610,104</text>
<text x="882.30" y="475.98" font-size="6.4" text-anchor="middle" fill="#1a1a1a">$3,170,658</text>
<text x="920.70" y="475.98" font-size="6.4" text-anchor="middle" fill="#1a1a1a">$12,456,263</text>
<text x="958.95" y="475.98" font-size="6.4" text-anchor="middle" fill="#1a1a1a">$125</text>
<text x="995.95" y="475.98" font-size="6.4" text-anchor="middle" fill="#1a1a1a">$10.4</text>
<text x="16.00" y="484.93" font-size="6.4" fill="#1a1a1a">2023</text>
<text x="72.95" y="484.93" font-size="6.4" text-anchor="middle" fill="#1a1a1a">$6,477,060</text>
<text x="110.10" y="484.93" font-size="6.4" text-anchor="middle" fill="#1a1a1a">$2,280,723</text>
<text x="147.70" y="484.93" font-size="6.4" text-anchor="middle" fill="#1a1a1a">-$777,571</text>
<text x="185.55" y="484.93" font-size="6.4" text-anchor="middle" fill="#1a1a1a">-$1,890,676</text>
<text x="222.55" y="484.93" font-size="6.4" text-anchor="middle" fill="#1a1a1a">$1,207,722</text>
<text x="258.70" y="484.93" font-size="6.4" text-anchor="middle" fill="#1a1a1a">$1,073,134</text>
<text x="293.15" y="484.93" font-size="6.4" text-anchor="middle" fill="#1a1a1a">$391,303</text>
<text x="328.60" y="484.93" font-size="6.4" text-anchor="middle" fill="#1a1a1a">-$829,762</text>
<text x="365.65" y="484.93" font-size="6.4" text-anchor="middle" fill="#1a1a1a">$824,077</text>
<text x="399.95" y="484.93" font-size="6.4" text-anchor="middle" fill="#1a1a1a">$107,919</text>
<text x="434.30" y="484.93" font-size="6.4" text-anchor="middle" fill="#1a1a1a">$3,812</text>
<text x="470.40" y="484.93" font-size="6.4" text-anchor="middle" fill="#1a1a1a">$3,457,281</text>
<text x="508.25" y="484.93" font-size="6.4" text-anchor="middle" fill="#1a1a1a">$4,806,204</text>
<text x="547.80" y="484.93" font-size="6.4" text-anchor="middle" fill="#1a1a1a">$9,106,887</text>
<text x="587.45" y="484.93" font-size="6.4" text-anchor="middle" fill="#1a1a1a">$6,201,255</text>
<text x="627.50" y="484.93" font-size="6.4" text-anchor="middle" fill="#1a1a1a">$10,617,520</text>
<text x="664.55" y="484.93" font-size="6.4" text-anchor="middle" fill="#1a1a1a">134,929</text>
<text x="699.50" y="484.93" font-size="6.4" text-anchor="middle" fill="#1a1a1a">$5,699,489</text>
<text x="735.65" y="484.93" font-size="6.4" text-anchor="middle" fill="#1a1a1a">$390,047</text>
<text x="771.60" y="484.93" font-size="6.4" text-anchor="middle" fill="#1a1a1a">$2,280,856</text>
<text x="808.35" y="484.93" font-size="6.4" text-anchor="middle" fill="#1a1a1a">-$438,459</text>
<text x="845.50" y="484.93" font-size="6.4" text-anchor="middle" fill="#1a1a1a">$931,995</text>
<text x="882.30" y="484.93" font-size="6.4" text-anchor="middle" fill="#1a1a1a">$3,461,093</text>
<text x="920.70" y="484.93" font-size="6.4" text-anchor="middle" fill="#1a1a1a">$12,325,020</text>
<text x="958.95" y="484.93" font-size="6.4" text-anchor="middle" fill="#1a1a1a">$123</text>
<text x="995.95" y="484.93" font-size="6.4" text-anchor="middle" fill="#1a1a1a">$10.3</text>
<text x="16.00" y="493.88" font-size="6.4" fill="#1a1a1a">2024</text>
<text x="72.95" y="493.88" font-size="6.4" text-anchor="middle" fill="#1a1a1a">$6,925,313</text>
<text x="110.10" y="493.88" font-size="6.4" text-anchor="middle" fill="#1a1a1a">$2,203,261</text>
<text x="147.70" y="493.88" font-size="6.4" text-anchor="middle" fill="#1a1a1a">-$566,649</text>
<text x="185.55" y="493.88" font-size="6.4" text-anchor="middle" fill="#1a1a1a">-$1,377,135</text>
<text x="222.55" y="493.88" font-size="6.4" text-anchor="middle" fill="#1a1a1a">$1,342,280</text>
<text x="258.70" y="493.88" font-size="6.4" text-anchor="middle" fill="#1a1a1a">$996,365</text>
<text x="293.15" y="493.88" font-size="6.4" text-anchor="middle" fill="#1a1a1a">$348,489</text>
<text x="328.60" y="493.88" font-size="6.4" text-anchor="middle" fill="#1a1a1a">-$650,229</text>
<text x="365.65" y="493.88" font-size="6.4" text-anchor="middle" fill="#1a1a1a">$830,990</text>
<text x="399.95" y="493.88" font-size="6.4" text-anchor="middle" fill="#1a1a1a">$106,066</text>
<text x="434.30" y="493.88" font-size="6.4" text-anchor="middle" fill="#1a1a1a">$3,597</text>
<text x="470.40" y="493.88" font-size="6.4" text-anchor="middle" fill="#1a1a1a">$3,273,427</text>
<text x="508.25" y="493.88" font-size="6.4" text-anchor="middle" fill="#1a1a1a">$5,502,183</text>
<text x="547.80" y="493.88" font-size="6.4" text-anchor="middle" fill="#1a1a1a">$10,166,095</text>
<text x="587.45" y="493.88" font-size="6.4" text-anchor="middle" fill="#1a1a1a">$6,917,981</text>
<text x="627.50" y="493.88" font-size="6.4" text-anchor="middle" fill="#1a1a1a">$11,680,386</text>
<text x="664.55" y="493.88" font-size="6.4" text-anchor="middle" fill="#1a1a1a">132,725</text>
<text x="699.50" y="493.88" font-size="6.4" text-anchor="middle" fill="#1a1a1a">$6,358,664</text>
<text x="735.65" y="493.88" font-size="6.4" text-anchor="middle" fill="#1a1a1a">$826,126</text>
<text x="771.60" y="493.88" font-size="6.4" text-anchor="middle" fill="#1a1a1a">$2,337,645</text>
<text x="808.35" y="493.88" font-size="6.4" text-anchor="middle" fill="#1a1a1a">-$301,740</text>
<text x="845.50" y="493.88" font-size="6.4" text-anchor="middle" fill="#1a1a1a">$937,056</text>
<text x="882.30" y="493.88" font-size="6.4" text-anchor="middle" fill="#1a1a1a">$3,277,024</text>
<text x="920.70" y="493.88" font-size="6.4" text-anchor="middle" fill="#1a1a1a">$13,434,776</text>
<text x="958.95" y="493.88" font-size="6.4" text-anchor="middle" fill="#1a1a1a">$134</text>
<text x="995.95" y="493.88" font-size="6.4" text-anchor="middle" fill="#1a1a1a">$11.2</text>
<text x="16.00" y="502.83" font-size="6.4" fill="#1a1a1a">2025</text>
<text x="72.95" y="502.83" font-size="6.4" text-anchor="middle" fill="#1a1a1a">$7,169,060</text>
<text x="110.10" y="502.83" font-size="6.4" text-anchor="middle" fill="#1a1a1a">$2,827,675</text>
<text x="147.70" y="502.83" font-size="6.4" text-anchor="middle" fill="#1a1a1a">-$502,549</text>
<text x="185.55" y="502.83" font-size="6.4" text-anchor="middle" fill="#1a1a1a">-$1,085,524</text>
<text x="222.55" y="502.83" font-size="6.4" text-anchor="middle" fill="#1a1a1a">$50,183</text>
<text x="258.70" y="502.83" font-size="6.4" text-anchor="middle" fill="#1a1a1a">$34,521</text>
<text x="293.15" y="502.83" font-size="6.4" text-anchor="middle" fill="#1a1a1a">$125,625</text>
<text x="328.60" y="502.83" font-size="6.4" text-anchor="middle" fill="#1a1a1a">-$289,352</text>
<text x="365.65" y="502.83" font-size="6.4" text-anchor="middle" fill="#1a1a1a">$1,925,110</text>
<text x="399.95" y="502.83" font-size="6.4" text-anchor="middle" fill="#1a1a1a">$160,070</text>
<text x="434.30" y="502.83" font-size="6.4" text-anchor="middle" fill="#1a1a1a">$3,784</text>
<text x="470.40" y="502.83" font-size="6.4" text-anchor="middle" fill="#1a1a1a">$3,426,293</text>
<text x="508.25" y="502.83" font-size="6.4" text-anchor="middle" fill="#1a1a1a">$5,947,436</text>
<text x="547.80" y="502.83" font-size="6.4" text-anchor="middle" fill="#1a1a1a">$11,111,150</text>
<text x="587.45" y="502.83" font-size="6.4" text-anchor="middle" fill="#1a1a1a">$7,317,564</text>
<text x="627.50" y="502.83" font-size="6.4" text-anchor="middle" fill="#1a1a1a">$12,524,991</text>
<text x="664.55" y="502.83" font-size="6.4" text-anchor="middle" fill="#1a1a1a">130,714</text>
<text x="699.50" y="502.83" font-size="6.4" text-anchor="middle" fill="#1a1a1a">$6,666,511</text>
<text x="735.65" y="502.83" font-size="6.4" text-anchor="middle" fill="#1a1a1a">$1,742,152</text>
<text x="771.60" y="502.83" font-size="6.4" text-anchor="middle" fill="#1a1a1a">$84,704</text>
<text x="808.35" y="502.83" font-size="6.4" text-anchor="middle" fill="#1a1a1a">-$163,727</text>
<text x="845.50" y="502.83" font-size="6.4" text-anchor="middle" fill="#1a1a1a">$2,085,180</text>
<text x="882.30" y="502.83" font-size="6.4" text-anchor="middle" fill="#1a1a1a">$3,430,077</text>
<text x="920.70" y="502.83" font-size="6.4" text-anchor="middle" fill="#1a1a1a">$13,844,897</text>
<text x="958.95" y="502.83" font-size="6.4" text-anchor="middle" fill="#1a1a1a">$138</text>
<text x="995.95" y="502.83" font-size="6.4" text-anchor="middle" fill="#1a1a1a">$11.5</text>
<text x="16.00" y="511.78" font-size="6.4" fill="#1a1a1a">2026</text>
<text x="72.95" y="511.78" font-size="6.4" text-anchor="middle" fill="#1a1a1a">$6,891,440</text>
<text x="110.10" y="511.78" font-size="6.4" text-anchor="middle" fill="#1a1a1a">$2,155,147</text>
<text x="147.70" y="511.78" font-size="6.4" text-anchor="middle" fill="#1a1a1a">-$493,913</text>
<text x="185.55" y="511.78" font-size="6.4" text-anchor="middle" fill="#1a1a1a">-$899,809</text>
<text x="222.55" y="511.78" font-size="6.4" text-anchor="middle" fill="#1a1a1a">$1,454,374</text>
<text x="258.70" y="511.78" font-size="6.4" text-anchor="middle" fill="#1a1a1a">$1,175,899</text>
<text x="293.15" y="511.78" font-size="6.4" text-anchor="middle" fill="#1a1a1a">$58,925</text>
<text x="328.60" y="511.78" font-size="6.4" text-anchor="middle" fill="#1a1a1a">-$144,519</text>
<text x="365.65" y="511.78" font-size="6.4" text-anchor="middle" fill="#1a1a1a">$916,842</text>
<text x="399.95" y="511.78" font-size="6.4" text-anchor="middle" fill="#1a1a1a">$120,764</text>
<text x="434.30" y="511.78" font-size="6.4" text-anchor="middle" fill="#1a1a1a">$3,317</text>
<text x="470.40" y="511.78" font-size="6.4" text-anchor="middle" fill="#1a1a1a">$3,083,285</text>
<text x="508.25" y="511.78" font-size="6.4" text-anchor="middle" fill="#1a1a1a">$6,061,652</text>
<text x="547.80" y="511.78" font-size="6.4" text-anchor="middle" fill="#1a1a1a">$11,551,290</text>
<text x="587.45" y="511.78" font-size="6.4" text-anchor="middle" fill="#1a1a1a">$7,416,922</text>
<text x="627.50" y="511.78" font-size="6.4" text-anchor="middle" fill="#1a1a1a">$12,938,605</text>
<text x="664.55" y="511.78" font-size="6.4" text-anchor="middle" fill="#1a1a1a">128,852</text>
<text x="699.50" y="511.78" font-size="6.4" text-anchor="middle" fill="#1a1a1a">$6,397,526</text>
<text x="735.65" y="511.78" font-size="6.4" text-anchor="middle" fill="#1a1a1a">$1,255,338</text>
<text x="771.60" y="511.78" font-size="6.4" text-anchor="middle" fill="#1a1a1a">$2,630,273</text>
<text x="808.35" y="511.78" font-size="6.4" text-anchor="middle" fill="#1a1a1a">-$85,594</text>
<text x="845.50" y="511.78" font-size="6.4" text-anchor="middle" fill="#1a1a1a">$1,037,605</text>
<text x="882.30" y="511.78" font-size="6.4" text-anchor="middle" fill="#1a1a1a">$3,086,603</text>
<text x="920.70" y="511.78" font-size="6.4" text-anchor="middle" fill="#1a1a1a">$14,321,753</text>
<text x="958.95" y="511.78" font-size="6.4" text-anchor="middle" fill="#1a1a1a">$143</text>
<text x="995.95" y="511.78" font-size="6.4" text-anchor="middle" fill="#1a1a1a">$11.9</text>
<text x="16.00" y="520.73" font-size="6.4" fill="#1a1a1a">2027</text>
<text x="72.95" y="520.73" font-size="6.4" text-anchor="middle" fill="#1a1a1a">$6,275,365</text>
<text x="110.10" y="520.73" font-size="6.4" text-anchor="middle" fill="#1a1a1a">$2,665,324</text>
<text x="147.70" y="520.73" font-size="6.4" text-anchor="middle" fill="#1a1a1a">-$82,980</text>
<text x="185.55" y="520.73" font-size="6.4" text-anchor="middle" fill="#1a1a1a">$416,131</text>
<text x="222.55" y="520.73" font-size="6.4" text-anchor="middle" fill="#1a1a1a">$1,815,270</text>
<text x="258.70" y="520.73" font-size="6.4" text-anchor="middle" fill="#1a1a1a">$1,488,690</text>
<text x="293.15" y="520.73" font-size="6.4" text-anchor="middle" fill="#1a1a1a">$42,752</text>
<text x="328.60" y="520.73" font-size="6.4" text-anchor="middle" fill="#1a1a1a">-$48,645</text>
<text x="365.65" y="520.73" font-size="6.4" text-anchor="middle" fill="#1a1a1a">$1,006,533</text>
<text x="399.95" y="520.73" font-size="6.4" text-anchor="middle" fill="#1a1a1a">$109,493</text>
<text x="434.30" y="520.73" font-size="6.4" text-anchor="middle" fill="#1a1a1a">$2,978</text>
<text x="470.40" y="520.73" font-size="6.4" text-anchor="middle" fill="#1a1a1a">$2,992,158</text>
<text x="508.25" y="520.73" font-size="6.4" text-anchor="middle" fill="#1a1a1a">$7,303,111</text>
<text x="547.80" y="520.73" font-size="6.4" text-anchor="middle" fill="#1a1a1a">$13,957,021</text>
<text x="587.45" y="520.73" font-size="6.4" text-anchor="middle" fill="#1a1a1a">$8,655,822</text>
<text x="627.50" y="520.73" font-size="6.4" text-anchor="middle" fill="#1a1a1a">$15,309,226</text>
<text x="664.55" y="520.73" font-size="6.4" text-anchor="middle" fill="#1a1a1a">127,080</text>
<text x="699.50" y="520.73" font-size="6.4" text-anchor="middle" fill="#1a1a1a">$6,192,385</text>
<text x="735.65" y="520.73" font-size="6.4" text-anchor="middle" fill="#1a1a1a">$3,081,455</text>
<text x="771.60" y="520.73" font-size="6.4" text-anchor="middle" fill="#1a1a1a">$3,303,961</text>
<text x="808.35" y="520.73" font-size="6.4" text-anchor="middle" fill="#1a1a1a">-$5,893</text>
<text x="845.50" y="520.73" font-size="6.4" text-anchor="middle" fill="#1a1a1a">$1,116,025</text>
<text x="882.30" y="520.73" font-size="6.4" text-anchor="middle" fill="#1a1a1a">$2,995,136</text>
<text x="920.70" y="520.73" font-size="6.4" text-anchor="middle" fill="#1a1a1a">$16,683,068</text>
<text x="958.95" y="520.73" font-size="6.4" text-anchor="middle" fill="#1a1a1a">$167</text>
<text x="995.95" y="520.73" font-size="6.4" text-anchor="middle" fill="#1a1a1a">$13.9</text>
<text x="16.00" y="529.67" font-size="6.4" fill="#1a1a1a">2028</text>
<text x="72.95" y="529.67" font-size="6.4" text-anchor="middle" fill="#1a1a1a">$6,513,202</text>
<text x="110.10" y="529.67" font-size="6.4" text-anchor="middle" fill="#1a1a1a">$2,213,061</text>
<text x="147.70" y="529.67" font-size="6.4" text-anchor="middle" fill="#1a1a1a">$75,803</text>
<text x="185.55" y="529.67" font-size="6.4" text-anchor="middle" fill="#1a1a1a">$764,486</text>
<text x="222.55" y="529.67" font-size="6.4" text-anchor="middle" fill="#1a1a1a">$1,759,530</text>
<text x="258.70" y="529.67" font-size="6.4" text-anchor="middle" fill="#1a1a1a">$1,500,116</text>
<text x="293.15" y="529.67" font-size="6.4" text-anchor="middle" fill="#1a1a1a">$31,825</text>
<text x="328.60" y="529.67" font-size="6.4" text-anchor="middle" fill="#1a1a1a">-$17,026</text>
<text x="365.65" y="529.67" font-size="6.4" text-anchor="middle" fill="#1a1a1a">$1,030,043</text>
<text x="399.95" y="529.67" font-size="6.4" text-anchor="middle" fill="#1a1a1a">$110,137</text>
<text x="434.30" y="529.67" font-size="6.4" text-anchor="middle" fill="#1a1a1a">$3,105</text>
<text x="470.40" y="529.67" font-size="6.4" text-anchor="middle" fill="#1a1a1a">$3,198,480</text>
<text x="508.25" y="529.67" font-size="6.4" text-anchor="middle" fill="#1a1a1a">$7,811,916</text>
<text x="547.80" y="529.67" font-size="6.4" text-anchor="middle" fill="#1a1a1a">$14,838,557</text>
<text x="587.45" y="529.67" font-size="6.4" text-anchor="middle" fill="#1a1a1a">$9,128,211</text>
<text x="627.50" y="529.67" font-size="6.4" text-anchor="middle" fill="#1a1a1a">$16,171,155</text>
<text x="664.55" y="529.67" font-size="6.4" text-anchor="middle" fill="#1a1a1a">125,410</text>
<text x="699.50" y="529.67" font-size="6.4" text-anchor="middle" fill="#1a1a1a">$6,589,004</text>
<text x="735.65" y="529.67" font-size="6.4" text-anchor="middle" fill="#1a1a1a">$2,977,547</text>
<text x="771.60" y="529.67" font-size="6.4" text-anchor="middle" fill="#1a1a1a">$3,259,646</text>
<text x="808.35" y="529.67" font-size="6.4" text-anchor="middle" fill="#1a1a1a">$14,799</text>
<text x="845.50" y="529.67" font-size="6.4" text-anchor="middle" fill="#1a1a1a">$1,140,179</text>
<text x="882.30" y="529.67" font-size="6.4" text-anchor="middle" fill="#1a1a1a">$3,201,585</text>
<text x="920.70" y="529.67" font-size="6.4" text-anchor="middle" fill="#1a1a1a">$17,182,761</text>
<text x="958.95" y="529.67" font-size="6.4" text-anchor="middle" fill="#1a1a1a">$172</text>
<text x="995.95" y="529.67" font-size="6.4" text-anchor="middle" fill="#1a1a1a">$14.3</text>
<text x="16.00" y="538.62" font-size="6.4" fill="#1a1a1a">2029</text>
<text x="72.95" y="538.62" font-size="6.4" text-anchor="middle" fill="#1a1a1a">$6,780,630</text>
<text x="110.10" y="538.62" font-size="6.4" text-anchor="middle" fill="#1a1a1a">$2,443,351</text>
<text x="147.70" y="538.62" font-size="6.4" text-anchor="middle" fill="#1a1a1a">$57,599</text>
<text x="185.55" y="538.62" font-size="6.4" text-anchor="middle" fill="#1a1a1a">$666,345</text>
<text x="222.55" y="538.62" font-size="6.4" text-anchor="middle" fill="#1a1a1a">$1,618,357</text>
<text x="258.70" y="538.62" font-size="6.4" text-anchor="middle" fill="#1a1a1a">$1,489,499</text>
<text x="293.15" y="538.62" font-size="6.4" text-anchor="middle" fill="#1a1a1a">$33,236</text>
<text x="328.60" y="538.62" font-size="6.4" text-anchor="middle" fill="#1a1a1a">-$22,840</text>
<text x="365.65" y="538.62" font-size="6.4" text-anchor="middle" fill="#1a1a1a">$1,260,569</text>
<text x="399.95" y="538.62" font-size="6.4" text-anchor="middle" fill="#1a1a1a">$130,232</text>
<text x="434.30" y="538.62" font-size="6.4" text-anchor="middle" fill="#1a1a1a">$2,857</text>
<text x="470.40" y="538.62" font-size="6.4" text-anchor="middle" fill="#1a1a1a">$3,021,979</text>
<text x="508.25" y="538.62" font-size="6.4" text-anchor="middle" fill="#1a1a1a">$7,921,360</text>
<text x="547.80" y="538.62" font-size="6.4" text-anchor="middle" fill="#1a1a1a">$15,143,853</text>
<text x="587.45" y="538.62" font-size="6.4" text-anchor="middle" fill="#1a1a1a">$9,298,334</text>
<text x="627.50" y="538.62" font-size="6.4" text-anchor="middle" fill="#1a1a1a">$16,494,136</text>
<text x="664.55" y="538.62" font-size="6.4" text-anchor="middle" fill="#1a1a1a">123,808</text>
<text x="699.50" y="538.62" font-size="6.4" text-anchor="middle" fill="#1a1a1a">$6,838,229</text>
<text x="735.65" y="538.62" font-size="6.4" text-anchor="middle" fill="#1a1a1a">$3,109,696</text>
<text x="771.60" y="538.62" font-size="6.4" text-anchor="middle" fill="#1a1a1a">$3,107,856</text>
<text x="808.35" y="538.62" font-size="6.4" text-anchor="middle" fill="#1a1a1a">$10,395</text>
<text x="845.50" y="538.62" font-size="6.4" text-anchor="middle" fill="#1a1a1a">$1,390,801</text>
<text x="882.30" y="538.62" font-size="6.4" text-anchor="middle" fill="#1a1a1a">$3,024,836</text>
<text x="920.70" y="538.62" font-size="6.4" text-anchor="middle" fill="#1a1a1a">$17,481,812</text>
<text x="958.95" y="538.62" font-size="6.4" text-anchor="middle" fill="#1a1a1a">$175</text>
<text x="995.95" y="538.62" font-size="6.4" text-anchor="middle" fill="#1a1a1a">$14.6</text>
<text x="16.00" y="547.57" font-size="6.4" fill="#1a1a1a">2030</text>
<text x="72.95" y="547.57" font-size="6.4" text-anchor="middle" fill="#1a1a1a">$6,848,168</text>
<text x="110.10" y="547.57" font-size="6.4" text-anchor="middle" fill="#1a1a1a">$2,288,045</text>
<text x="147.70" y="547.57" font-size="6.4" text-anchor="middle" fill="#1a1a1a">$50,040</text>
<text x="185.55" y="547.57" font-size="6.4" text-anchor="middle" fill="#1a1a1a">$835,458</text>
<text x="222.55" y="547.57" font-size="6.4" text-anchor="middle" fill="#1a1a1a">$1,990,431</text>
<text x="258.70" y="547.57" font-size="6.4" text-anchor="middle" fill="#1a1a1a">$1,656,638</text>
<text x="293.15" y="547.57" font-size="6.4" text-anchor="middle" fill="#1a1a1a">$35,594</text>
<text x="328.60" y="547.57" font-size="6.4" text-anchor="middle" fill="#1a1a1a">-$16,161</text>
<text x="365.65" y="547.57" font-size="6.4" text-anchor="middle" fill="#1a1a1a">$1,216,960</text>
<text x="399.95" y="547.57" font-size="6.4" text-anchor="middle" fill="#1a1a1a">$126,840</text>
<text x="434.30" y="547.57" font-size="6.4" text-anchor="middle" fill="#1a1a1a">$2,877</text>
<text x="470.40" y="547.57" font-size="6.4" text-anchor="middle" fill="#1a1a1a">$3,032,863</text>
<text x="508.25" y="547.57" font-size="6.4" text-anchor="middle" fill="#1a1a1a">$8,413,411</text>
<text x="547.80" y="547.57" font-size="6.4" text-anchor="middle" fill="#1a1a1a">$15,724,692</text>
<text x="587.45" y="547.57" font-size="6.4" text-anchor="middle" fill="#1a1a1a">$9,803,487</text>
<text x="627.50" y="547.57" font-size="6.4" text-anchor="middle" fill="#1a1a1a">$17,141,578</text>
<text x="664.55" y="547.57" font-size="6.4" text-anchor="middle" fill="#1a1a1a">122,261</text>
<text x="699.50" y="547.57" font-size="6.4" text-anchor="middle" fill="#1a1a1a">$6,898,208</text>
<text x="735.65" y="547.57" font-size="6.4" text-anchor="middle" fill="#1a1a1a">$3,123,503</text>
<text x="771.60" y="547.57" font-size="6.4" text-anchor="middle" fill="#1a1a1a">$3,647,069</text>
<text x="808.35" y="547.57" font-size="6.4" text-anchor="middle" fill="#1a1a1a">$19,432</text>
<text x="845.50" y="547.57" font-size="6.4" text-anchor="middle" fill="#1a1a1a">$1,343,799</text>
<text x="882.30" y="547.57" font-size="6.4" text-anchor="middle" fill="#1a1a1a">$3,035,740</text>
<text x="920.70" y="547.57" font-size="6.4" text-anchor="middle" fill="#1a1a1a">$18,067,752</text>
<text x="958.95" y="547.57" font-size="6.4" text-anchor="middle" fill="#1a1a1a">$181</text>
<text x="995.95" y="547.57" font-size="6.4" text-anchor="middle" fill="#1a1a1a">$15.1</text>
<text x="16.00" y="556.52" font-size="6.4" fill="#1a1a1a">2031</text>
<text x="72.95" y="556.52" font-size="6.4" text-anchor="middle" fill="#1a1a1a">$7,153,785</text>
<text x="110.10" y="556.52" font-size="6.4" text-anchor="middle" fill="#1a1a1a">$2,337,813</text>
<text x="147.70" y="556.52" font-size="6.4" text-anchor="middle" fill="#1a1a1a">$44,402</text>
<text x="185.55" y="556.52" font-size="6.4" text-anchor="middle" fill="#1a1a1a">$700,343</text>
<text x="222.55" y="556.52" font-size="6.4" text-anchor="middle" fill="#1a1a1a">$2,170,940</text>
<text x="258.70" y="556.52" font-size="6.4" text-anchor="middle" fill="#1a1a1a">$1,673,789</text>
<text x="293.15" y="556.52" font-size="6.4" text-anchor="middle" fill="#1a1a1a">$33,166</text>
<text x="328.60" y="556.52" font-size="6.4" text-anchor="middle" fill="#1a1a1a">-$17,061</text>
<text x="365.65" y="556.52" font-size="6.4" text-anchor="middle" fill="#1a1a1a">$1,188,712</text>
<text x="399.95" y="556.52" font-size="6.4" text-anchor="middle" fill="#1a1a1a">$125,788</text>
<text x="434.30" y="556.52" font-size="6.4" text-anchor="middle" fill="#1a1a1a">$2,896</text>
<text x="470.40" y="556.52" font-size="6.4" text-anchor="middle" fill="#1a1a1a">$3,213,119</text>
<text x="508.25" y="556.52" font-size="6.4" text-anchor="middle" fill="#1a1a1a">$8,559,624</text>
<text x="547.80" y="556.52" font-size="6.4" text-anchor="middle" fill="#1a1a1a">$16,333,030</text>
<text x="587.45" y="556.52" font-size="6.4" text-anchor="middle" fill="#1a1a1a">$9,958,605</text>
<text x="627.50" y="556.52" font-size="6.4" text-anchor="middle" fill="#1a1a1a">$17,718,401</text>
<text x="664.55" y="556.52" font-size="6.4" text-anchor="middle" fill="#1a1a1a">120,771</text>
<text x="699.50" y="556.52" font-size="6.4" text-anchor="middle" fill="#1a1a1a">$7,198,187</text>
<text x="735.65" y="556.52" font-size="6.4" text-anchor="middle" fill="#1a1a1a">$3,038,156</text>
<text x="771.60" y="556.52" font-size="6.4" text-anchor="middle" fill="#1a1a1a">$3,844,730</text>
<text x="808.35" y="556.52" font-size="6.4" text-anchor="middle" fill="#1a1a1a">$16,105</text>
<text x="845.50" y="556.52" font-size="6.4" text-anchor="middle" fill="#1a1a1a">$1,314,498</text>
<text x="882.30" y="556.52" font-size="6.4" text-anchor="middle" fill="#1a1a1a">$3,216,015</text>
<text x="920.70" y="556.52" font-size="6.4" text-anchor="middle" fill="#1a1a1a">$18,627,690</text>
<text x="958.95" y="556.52" font-size="6.4" text-anchor="middle" fill="#1a1a1a">$186</text>
<text x="995.95" y="556.52" font-size="6.4" text-anchor="middle" fill="#1a1a1a">$15.5</text>
<text x="16.00" y="565.48" font-size="6.4" fill="#1a1a1a">2032</text>
<text x="72.95" y="565.48" font-size="6.4" text-anchor="middle" fill="#1a1a1a">$7,503,375</text>
<text x="110.10" y="565.48" font-size="6.4" text-anchor="middle" fill="#1a1a1a">$2,268,574</text>
<text x="147.70" y="565.48" font-size="6.4" text-anchor="middle" fill="#1a1a1a">-$37,342</text>
<text x="185.55" y="565.48" font-size="6.4" text-anchor="middle" fill="#1a1a1a">$540,871</text>
<text x="222.55" y="565.48" font-size="6.4" text-anchor="middle" fill="#1a1a1a">$1,874,529</text>
<text x="258.70" y="565.48" font-size="6.4" text-anchor="middle" fill="#1a1a1a">$1,657,935</text>
<text x="293.15" y="565.48" font-size="6.4" text-anchor="middle" fill="#1a1a1a">$36,101</text>
<text x="328.60" y="565.48" font-size="6.4" text-anchor="middle" fill="#1a1a1a">-$27,030</text>
<text x="365.65" y="565.48" font-size="6.4" text-anchor="middle" fill="#1a1a1a">$1,185,646</text>
<text x="399.95" y="565.48" font-size="6.4" text-anchor="middle" fill="#1a1a1a">$129,382</text>
<text x="434.30" y="565.48" font-size="6.4" text-anchor="middle" fill="#1a1a1a">$2,983</text>
<text x="470.40" y="565.48" font-size="6.4" text-anchor="middle" fill="#1a1a1a">$3,219,731</text>
<text x="508.25" y="565.48" font-size="6.4" text-anchor="middle" fill="#1a1a1a">$8,729,500</text>
<text x="547.80" y="565.48" font-size="6.4" text-anchor="middle" fill="#1a1a1a">$16,393,031</text>
<text x="587.45" y="565.48" font-size="6.4" text-anchor="middle" fill="#1a1a1a">$10,150,044</text>
<text x="627.50" y="565.48" font-size="6.4" text-anchor="middle" fill="#1a1a1a">$17,809,449</text>
<text x="664.55" y="565.48" font-size="6.4" text-anchor="middle" fill="#1a1a1a">119,325</text>
<text x="699.50" y="565.48" font-size="6.4" text-anchor="middle" fill="#1a1a1a">$7,466,033</text>
<text x="735.65" y="565.48" font-size="6.4" text-anchor="middle" fill="#1a1a1a">$2,809,445</text>
<text x="771.60" y="565.48" font-size="6.4" text-anchor="middle" fill="#1a1a1a">$3,532,463</text>
<text x="808.35" y="565.48" font-size="6.4" text-anchor="middle" fill="#1a1a1a">$9,071</text>
<text x="845.50" y="565.48" font-size="6.4" text-anchor="middle" fill="#1a1a1a">$1,315,028</text>
<text x="882.30" y="565.48" font-size="6.4" text-anchor="middle" fill="#1a1a1a">$3,222,714</text>
<text x="920.70" y="565.48" font-size="6.4" text-anchor="middle" fill="#1a1a1a">$18,354,755</text>
<text x="958.95" y="565.48" font-size="6.4" text-anchor="middle" fill="#1a1a1a">$184</text>
<text x="995.95" y="565.48" font-size="6.4" text-anchor="middle" fill="#1a1a1a">$15.3</text>
<text x="16.00" y="574.42" font-size="6.4" fill="#1a1a1a">2033</text>
<text x="72.95" y="574.42" font-size="6.4" text-anchor="middle" fill="#1a1a1a">$7,079,087</text>
<text x="110.10" y="574.42" font-size="6.4" text-anchor="middle" fill="#1a1a1a">$2,258,688</text>
<text x="147.70" y="574.42" font-size="6.4" text-anchor="middle" fill="#1a1a1a">$150,698</text>
<text x="185.55" y="574.42" font-size="6.4" text-anchor="middle" fill="#1a1a1a">$938,464</text>
<text x="222.55" y="574.42" font-size="6.4" text-anchor="middle" fill="#1a1a1a">$1,888,144</text>
<text x="258.70" y="574.42" font-size="6.4" text-anchor="middle" fill="#1a1a1a">$1,683,405</text>
<text x="293.15" y="574.42" font-size="6.4" text-anchor="middle" fill="#1a1a1a">$30,312</text>
<text x="328.60" y="574.42" font-size="6.4" text-anchor="middle" fill="#1a1a1a">-$15,210</text>
<text x="365.65" y="574.42" font-size="6.4" text-anchor="middle" fill="#1a1a1a">$1,350,554</text>
<text x="399.95" y="574.42" font-size="6.4" text-anchor="middle" fill="#1a1a1a">$140,250</text>
<text x="434.30" y="574.42" font-size="6.4" text-anchor="middle" fill="#1a1a1a">$2,944</text>
<text x="470.40" y="574.42" font-size="6.4" text-anchor="middle" fill="#1a1a1a">$3,358,264</text>
<text x="508.25" y="574.42" font-size="6.4" text-anchor="middle" fill="#1a1a1a">$8,770,650</text>
<text x="547.80" y="574.42" font-size="6.4" text-anchor="middle" fill="#1a1a1a">$16,950,733</text>
<text x="587.45" y="574.42" font-size="6.4" text-anchor="middle" fill="#1a1a1a">$10,318,086</text>
<text x="627.50" y="574.42" font-size="6.4" text-anchor="middle" fill="#1a1a1a">$18,471,619</text>
<text x="664.55" y="574.42" font-size="6.4" text-anchor="middle" fill="#1a1a1a">117,924</text>
<text x="699.50" y="574.42" font-size="6.4" text-anchor="middle" fill="#1a1a1a">$7,230,785</text>
<text x="735.65" y="574.42" font-size="6.4" text-anchor="middle" fill="#1a1a1a">$3,196,152</text>
<text x="771.60" y="574.42" font-size="6.4" text-anchor="middle" fill="#1a1a1a">$3,571,549</text>
<text x="808.35" y="574.42" font-size="6.4" text-anchor="middle" fill="#1a1a1a">$15,102</text>
<text x="845.50" y="574.42" font-size="6.4" text-anchor="middle" fill="#1a1a1a">$1,490,804</text>
<text x="882.30" y="574.42" font-size="6.4" text-anchor="middle" fill="#1a1a1a">$3,361,208</text>
<text x="920.70" y="574.42" font-size="6.4" text-anchor="middle" fill="#1a1a1a">$19,706,858</text>
<text x="958.95" y="574.42" font-size="6.4" text-anchor="middle" fill="#1a1a1a">$197</text>
<text x="995.95" y="574.42" font-size="6.4" text-anchor="middle" fill="#1a1a1a">$15.7</text>
<line x1="15.00" x2="15.00" y1="426.5" y2="600" stroke="#6c6c6c" stroke-width="0.95"/>
<line x1="54.50" x2="54.50" y1="426.5" y2="600" stroke="#6c6c6c" stroke-width="0.95"/>
<line x1="91.40" x2="91.40" y1="426.5" y2="600" stroke="#6c6c6c" stroke-width="0.95"/>
<line x1="128.80" x2="128.80" y1="426.5" y2="600" stroke="#6c6c6c" stroke-width="0.95"/>
<line x1="166.60" x2="166.60" y1="426.5" y2="600" stroke="#6c6c6c" stroke-width="0.95"/>
<line x1="204.50" x2="204.50" y1="426.5" y2="600" stroke="#6c6c6c" stroke-width="0.95"/>
<line x1="240.60" x2="240.60" y1="426.5" y2="600" stroke="#6c6c6c" stroke-width="0.95"/>
<line x1="276.80" x2="276.80" y1="426.5" y2="600" stroke="#6c6c6c" stroke-width="0.95"/>
<line x1="309.50" x2="309.50" y1="426.5" y2="600" stroke="#6c6c6c" stroke-width="0.95"/>
<line x1="347.70" x2="347.70" y1="426.5" y2="600" stroke="#6c6c6c" stroke-width="0.95"/>
<line x1="383.60" x2="383.60" y1="426.5" y2="600" stroke="#6c6c6c" stroke-width="0.95"/>
<line x1="416.30" x2="416.30" y1="426.5" y2="600" stroke="#6c6c6c" stroke-width="0.95"/>
<line x1="452.30" x2="452.30" y1="426.5" y2="600" stroke="#6c6c6c" stroke-width="0.95"/>
<line x1="488.50" x2="488.50" y1="426.5" y2="600" stroke="#6c6c6c" stroke-width="0.95"/>
<line x1="528.00" x2="528.00" y1="426.5" y2="600" stroke="#6c6c6c" stroke-width="0.95"/>
<line x1="567.60" x2="567.60" y1="426.5" y2="600" stroke="#6c6c6c" stroke-width="0.95"/>
<line x1="607.30" x2="607.30" y1="426.5" y2="600" stroke="#6c6c6c" stroke-width="0.95"/>
<line x1="647.70" x2="647.70" y1="426.5" y2="600" stroke="#6c6c6c" stroke-width="0.95"/>
<line x1="681.40" x2="681.40" y1="426.5" y2="600" stroke="#6c6c6c" stroke-width="0.95"/>
<line x1="717.60" x2="717.60" y1="426.5" y2="600" stroke="#6c6c6c" stroke-width="0.95"/>
<line x1="753.70" x2="753.70" y1="426.5" y2="600" stroke="#6c6c6c" stroke-width="0.95"/>
<line x1="789.50" x2="789.50" y1="426.5" y2="600" stroke="#6c6c6c" stroke-width="0.95"/>
<line x1="827.20" x2="827.20" y1="426.5" y2="600" stroke="#6c6c6c" stroke-width="0.95"/>
<line x1="863.80" x2="863.80" y1="426.5" y2="600" stroke="#6c6c6c" stroke-width="0.95"/>
<line x1="900.80" x2="900.80" y1="426.5" y2="600" stroke="#6c6c6c" stroke-width="0.95"/>
<line x1="940.60" x2="940.60" y1="426.5" y2="600" stroke="#6c6c6c" stroke-width="0.95"/>
<line x1="977.30" x2="977.30" y1="426.5" y2="600" stroke="#6c6c6c" stroke-width="0.95"/>
<line x1="1014.60" x2="1014.60" y1="426.5" y2="600" stroke="#6c6c6c" stroke-width="0.95"/>
<line x1="15" x2="1014.6" y1="426.50" y2="426.50" stroke="#6c6c6c" stroke-width="0.95"/>
<line x1="15" x2="1014.6" y1="450.30" y2="450.30" stroke="#6c6c6c" stroke-width="0.95"/>
<line x1="15" x2="1014.6" y1="459.25" y2="459.25" stroke="#6c6c6c" stroke-width="0.95"/>
<line x1="15" x2="1014.6" y1="468.20" y2="468.20" stroke="#6c6c6c" stroke-width="0.95"/>
<line x1="15" x2="1014.6" y1="477.15" y2="477.15" stroke="#6c6c6c" stroke-width="0.95"/>
<line x1="15" x2="1014.6" y1="486.10" y2="486.10" stroke="#6c6c6c" stroke-width="0.95"/>
<line x1="15" x2="1014.6" y1="495.05" y2="495.05" stroke="#6c6c6c" stroke-width="0.95"/>
<line x1="15" x2="1014.6" y1="504.00" y2="504.00" stroke="#6c6c6c" stroke-width="0.95"/>
<line x1="15" x2="1014.6" y1="512.95" y2="512.95" stroke="#6c6c6c" stroke-width="0.95"/>
<line x1="15" x2="1014.6" y1="521.90" y2="521.90" stroke="#6c6c6c" stroke-width="0.95"/>
<line x1="15" x2="1014.6" y1="530.85" y2="530.85" stroke="#6c6c6c" stroke-width="0.95"/>
<line x1="15" x2="1014.6" y1="539.80" y2="539.80" stroke="#6c6c6c" stroke-width="0.95"/>
<line x1="15" x2="1014.6" y1="548.75" y2="548.75" stroke="#6c6c6c" stroke-width="0.95"/>
<line x1="15" x2="1014.6" y1="557.70" y2="557.70" stroke="#6c6c6c" stroke-width="0.95"/>
<line x1="15" x2="1014.6" y1="566.65" y2="566.65" stroke="#6c6c6c" stroke-width="0.95"/>
<line x1="15" x2="1014.6" y1="575.60" y2="575.60" stroke="#6c6c6c" stroke-width="0.95"/>
<!-- bottom gray bar -->
<rect x="0" y="570.8" width="1024" height="24" fill="#dcdcdc"/>
<!-- outer frame -->
<rect x="0" y="0" width="1024" height="2" fill="#8a8a8a"/>
<rect x="0" y="0" width="1.5" height="594" fill="#6e6e6e"/>
<rect x="1022.6" y="0" width="1.4" height="594" fill="#6e6e6e"/>
<rect x="0" y="592.4" width="1024" height="1.6" fill="#6e6e6e"/>
</svg>
</body></html>
